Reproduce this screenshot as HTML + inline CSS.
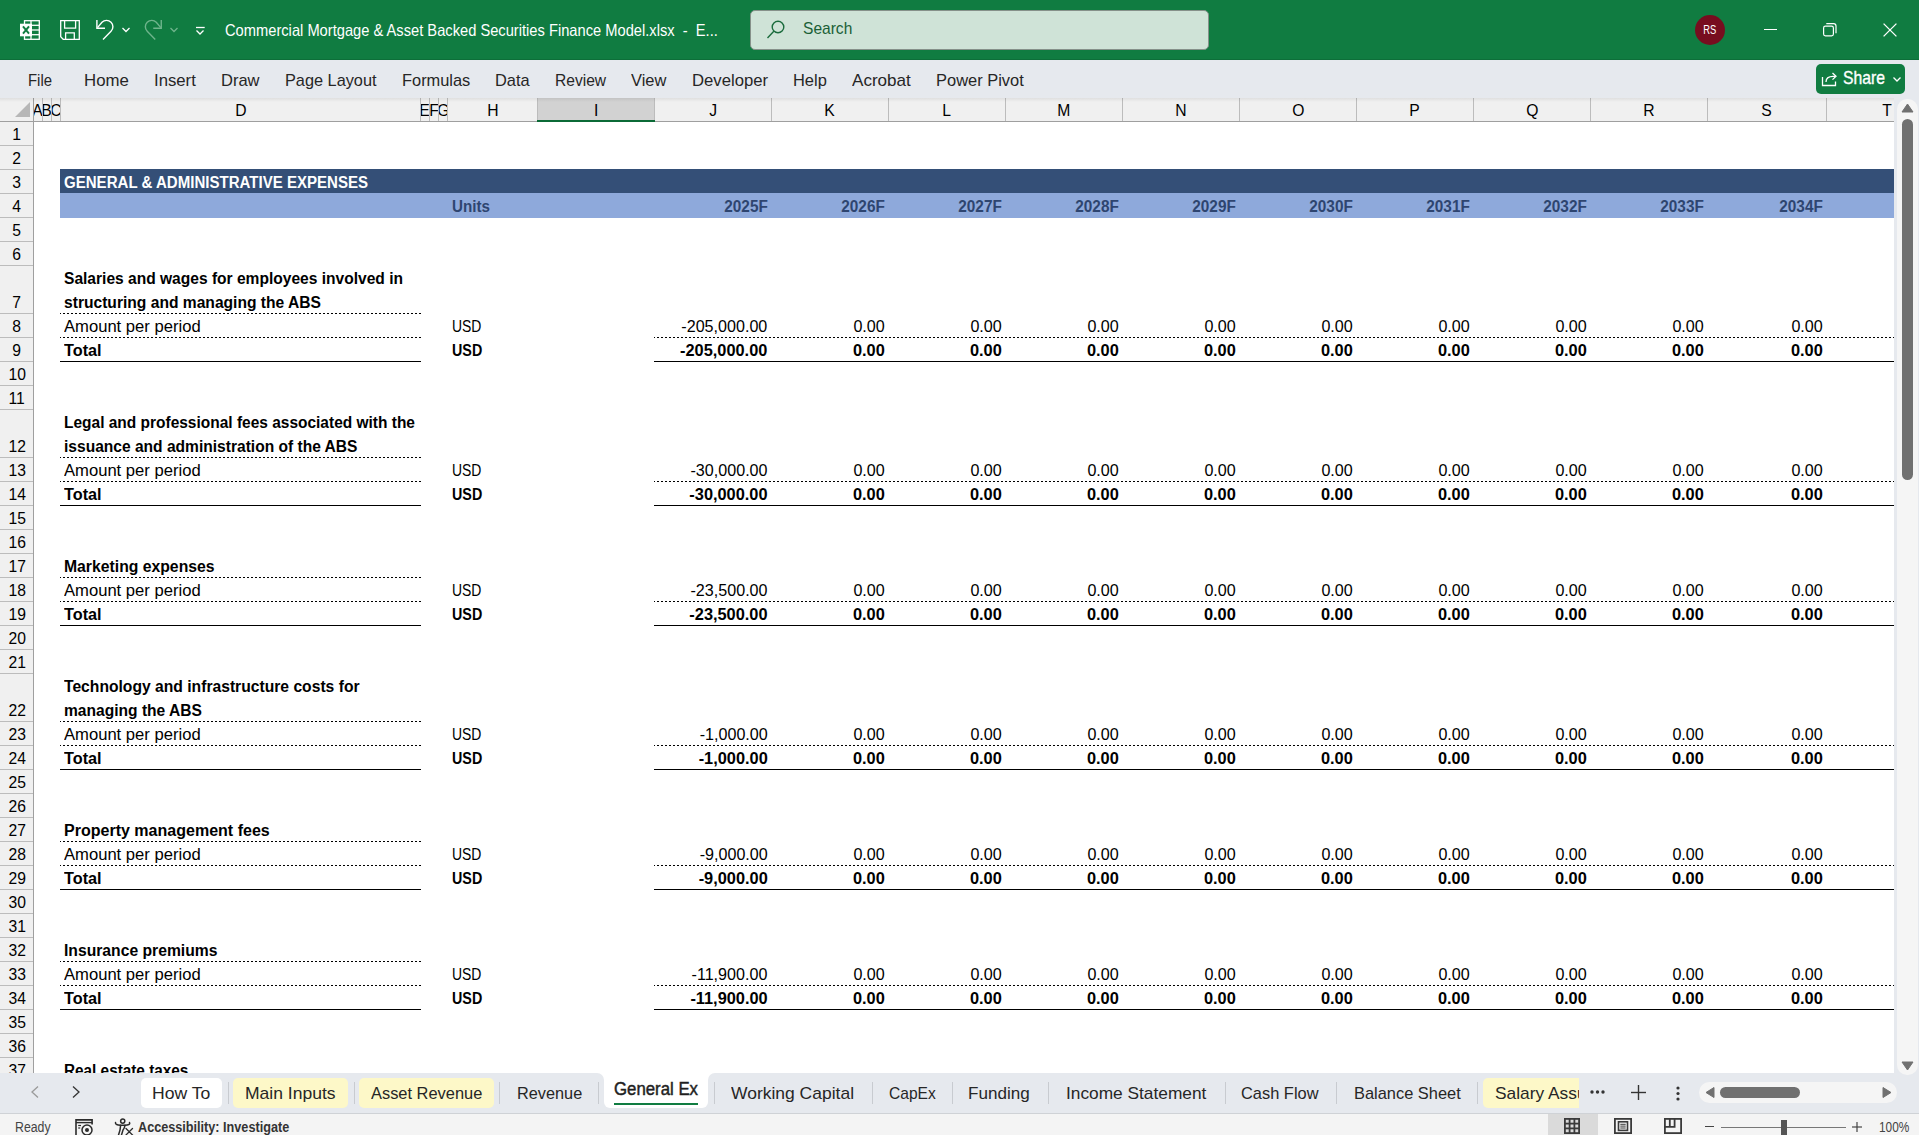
<!DOCTYPE html>
<html><head><meta charset="utf-8"><style>
html,body{margin:0;padding:0;}
body{width:1919px;height:1135px;position:relative;overflow:hidden;background:#fff;font-family:"Liberation Sans",sans-serif;}
.t{position:absolute;white-space:nowrap;}
</style></head><body>
<div style="position:absolute;left:0px;top:0px;width:1919px;height:60px;background:#107c41;"></div>
<div style="position:absolute;left:0px;top:59px;width:1919px;height:1px;background:#0d6e39;"></div>
<svg style="position:absolute;left:20px;top:20px;" width="20" height="20" viewBox="0 0 20 20"><g fill="none" stroke="#fff" stroke-width="1.3"><rect x="4.5" y="0.7" width="14.8" height="18.6"/><line x1="11" y1="5.3" x2="19.3" y2="5.3"/><line x1="11" y1="10" x2="19.3" y2="10"/><line x1="11" y1="14.7" x2="19.3" y2="14.7"/><line x1="11" y1="0.7" x2="11" y2="19.3"/></g><rect x="0" y="3.7" width="12" height="12.6" fill="#fff"/><path d="M3 6.3 L9 13.7 M9 6.3 L3 13.7" stroke="#107c41" stroke-width="2"/></svg>
<svg style="position:absolute;left:60px;top:20px;" width="20" height="20" viewBox="0 0 20 20"><g fill="none" stroke="#fff" stroke-width="1.3"><path d="M0.7 0.7 H19.3 V19.3 H3.2 L0.7 16.8 Z"/><path d="M4.6 0.7 V8.2 H15.6 V0.7"/><path d="M5.6 19.3 V12.8 H14.3 V19.3"/></g></svg>
<svg style="position:absolute;left:95px;top:19px;" width="22" height="22" viewBox="0 0 22 22"><g fill="none" stroke="#fff" stroke-width="1.4"><path d="M1.9 1 V9.2 H10"/><path d="M2.5 8.6 L6.97 3.27 A6.4 6.4 0 1 1 16.03 12.33 L8 20.4"/></g></svg>
<svg style="position:absolute;left:121px;top:26px;" width="10" height="8" viewBox="0 0 10 8"><path d="M1.5 2 L5 5.5 L8.5 2" fill="none" stroke="#fff" stroke-width="1.3"/></svg>
<svg style="position:absolute;left:143px;top:19px;" width="22" height="22" viewBox="0 0 22 22"><g fill="none" stroke="#6fb48c" stroke-width="1.4"><path d="M18.25 1 V9.2 H10.25"/><path d="M17.75 8.6 L13.28 3.27 A6.4 6.4 0 1 0 4.22 12.33 L12.25 20.4"/></g></svg>
<svg style="position:absolute;left:169px;top:26px;" width="10" height="8" viewBox="0 0 10 8"><path d="M1.5 2 L5 5.5 L8.5 2" fill="none" stroke="#6fb48c" stroke-width="1.3"/></svg>
<svg style="position:absolute;left:194px;top:25px;" width="12" height="12" viewBox="0 0 12 12"><g fill="none" stroke="#fff" stroke-width="1.3"><line x1="2" y1="2.5" x2="10.7" y2="2.5"/><path d="M2.5 5.5 L6 9 L9.5 5.5"/></g></svg>
<div class="t" style="left:225px;top:22.33px;font-size:16.5px;line-height:16.5px;color:#fff;"><span style="display:inline-block;transform:scaleX(0.8898);transform-origin:left 0;">Commercial Mortgage &amp; Asset Backed Securities Finance Model.xlsx&nbsp; -&nbsp; E...</span></div>
<div style="position:absolute;left:750px;top:10px;width:459px;height:40px;background:#cfe3d7;border:1px solid #86918a;border-radius:5px;box-sizing:border-box;"></div>
<svg style="position:absolute;left:765px;top:19px;" width="22" height="22" viewBox="0 0 22 22"><g fill="none" stroke="#1a6b3c" stroke-width="1.4"><circle cx="13" cy="8" r="5.8"/><line x1="8.8" y1="12.2" x2="2.5" y2="19"/></g></svg>
<div class="t" style="left:802.7px;top:20.21px;font-size:17px;line-height:17px;color:#1a5f36;"><span style="display:inline-block;transform:scaleX(0.9153);transform-origin:left 0;">Search</span></div>
<div style="position:absolute;left:1695px;top:15px;width:30px;height:30px;background:#770d1f;border-radius:50%;"></div>
<div class="t" style="left:710px;width:2000px;text-align:center;top:23.92px;font-size:12.5px;line-height:12.5px;color:#fff;"><span style="display:inline-block;transform:scaleX(0.7482);transform-origin:center 0;">RS</span></div>
<div style="position:absolute;left:1764px;top:29px;width:13px;height:1.3px;background:#fff;"></div>
<svg style="position:absolute;left:1822px;top:22px;" width="17" height="17" viewBox="0 0 17 17"><g fill="none" stroke="#fff" stroke-width="1.2"><rect x="1.6" y="4.1" width="9.8" height="9.8" rx="1.8"/><path d="M4.3 1.6 H11.6 A2.4 2.4 0 0 1 14 4 V11.3"/></g></svg>
<svg style="position:absolute;left:1882px;top:22px;" width="17" height="17" viewBox="0 0 17 17"><g stroke="#fff" stroke-width="1.3"><line x1="1.6" y1="1.6" x2="14.4" y2="14.4"/><line x1="14.4" y1="1.6" x2="1.6" y2="14.4"/></g></svg>
<div style="position:absolute;left:0px;top:60px;width:1919px;height:38px;background:#e6e9ee;"></div>
<div class="t" style="left:27.5px;top:71.61px;font-size:17px;line-height:17px;color:#262626;"><span style="display:inline-block;transform:scaleX(0.8757);transform-origin:left 0;">File</span></div>
<div class="t" style="left:84.4px;top:71.61px;font-size:17px;line-height:17px;color:#262626;"><span style="display:inline-block;transform:scaleX(0.9880);transform-origin:left 0;">Home</span></div>
<div class="t" style="left:154.2px;top:71.61px;font-size:17px;line-height:17px;color:#262626;"><span style="display:inline-block;transform:scaleX(0.9835);transform-origin:left 0;">Insert</span></div>
<div class="t" style="left:220.5px;top:71.61px;font-size:17px;line-height:17px;color:#262626;"><span style="display:inline-block;transform:scaleX(0.9705);transform-origin:left 0;">Draw</span></div>
<div class="t" style="left:284.5px;top:71.61px;font-size:17px;line-height:17px;color:#262626;"><span style="display:inline-block;transform:scaleX(0.9586);transform-origin:left 0;">Page Layout</span></div>
<div class="t" style="left:401.5px;top:71.61px;font-size:17px;line-height:17px;color:#262626;"><span style="display:inline-block;transform:scaleX(0.9641);transform-origin:left 0;">Formulas</span></div>
<div class="t" style="left:494.6px;top:71.61px;font-size:17px;line-height:17px;color:#262626;"><span style="display:inline-block;transform:scaleX(0.9636);transform-origin:left 0;">Data</span></div>
<div class="t" style="left:554.6px;top:71.61px;font-size:17px;line-height:17px;color:#262626;"><span style="display:inline-block;transform:scaleX(0.9166);transform-origin:left 0;">Review</span></div>
<div class="t" style="left:631.4px;top:71.61px;font-size:17px;line-height:17px;color:#262626;"><span style="display:inline-block;transform:scaleX(0.9686);transform-origin:left 0;">View</span></div>
<div class="t" style="left:691.6px;top:71.61px;font-size:17px;line-height:17px;color:#262626;"><span style="display:inline-block;transform:scaleX(0.9821);transform-origin:left 0;">Developer</span></div>
<div class="t" style="left:792.5px;top:71.61px;font-size:17px;line-height:17px;color:#262626;"><span style="display:inline-block;transform:scaleX(0.9666);transform-origin:left 0;">Help</span></div>
<div class="t" style="left:851.5px;top:71.61px;font-size:17px;line-height:17px;color:#262626;"><span style="display:inline-block;transform:scaleX(1.0038);transform-origin:left 0;">Acrobat</span></div>
<div class="t" style="left:935.7px;top:71.61px;font-size:17px;line-height:17px;color:#262626;"><span style="display:inline-block;transform:scaleX(0.9680);transform-origin:left 0;">Power Pivot</span></div>
<div style="position:absolute;left:1816px;top:64px;width:89px;height:30px;background:#107c41;border-radius:5px;"></div>
<svg style="position:absolute;left:1821px;top:70px;" width="17" height="17" viewBox="0 0 17 17"><g fill="none" stroke="#fff" stroke-width="1.3"><path d="M1.5 7 V15.5 H14.5 V11.5"/><path d="M5 12 C5 8 8 6.3 12 6.3 H14"/><path d="M11.5 3 L15 6.3 L11.5 9.6"/></g></svg>
<div class="t" style="left:1843px;top:69.34px;font-size:18.5px;line-height:18.5px;color:#fff;-webkit-text-stroke:0.35px #fff;"><span style="display:inline-block;transform:scaleX(0.8512);transform-origin:left 0;">Share</span></div>
<svg style="position:absolute;left:1892px;top:76px;" width="10" height="7" viewBox="0 0 10 7"><path d="M1.5 1.5 L5 5 L8.5 1.5" fill="none" stroke="#fff" stroke-width="1.3"/></svg>
<div style="position:absolute;left:0px;top:98px;width:1894px;height:24px;background:#f0f0f0;"></div>
<svg style="position:absolute;left:0px;top:98px;" width="33" height="23" viewBox="0 0 33 23"><path d="M30 4 V19 H15 Z" fill="#b7b7b7"/></svg>
<div style="position:absolute;left:537px;top:98px;width:118px;height:22px;background:#d2d2d2;"></div>
<div style="position:absolute;left:42px;top:98px;width:1px;height:23px;background:#bcbcbc;"></div>
<div style="position:absolute;left:51px;top:98px;width:1px;height:23px;background:#bcbcbc;"></div>
<div style="position:absolute;left:60px;top:98px;width:1px;height:23px;background:#bcbcbc;"></div>
<div style="position:absolute;left:420px;top:98px;width:1px;height:23px;background:#bcbcbc;"></div>
<div style="position:absolute;left:429px;top:98px;width:1px;height:23px;background:#bcbcbc;"></div>
<div style="position:absolute;left:438px;top:98px;width:1px;height:23px;background:#bcbcbc;"></div>
<div style="position:absolute;left:447px;top:98px;width:1px;height:23px;background:#bcbcbc;"></div>
<div style="position:absolute;left:537px;top:98px;width:1px;height:23px;background:#bcbcbc;"></div>
<div style="position:absolute;left:654px;top:98px;width:1px;height:23px;background:#bcbcbc;"></div>
<div style="position:absolute;left:771px;top:98px;width:1px;height:23px;background:#bcbcbc;"></div>
<div style="position:absolute;left:888px;top:98px;width:1px;height:23px;background:#bcbcbc;"></div>
<div style="position:absolute;left:1005px;top:98px;width:1px;height:23px;background:#bcbcbc;"></div>
<div style="position:absolute;left:1122px;top:98px;width:1px;height:23px;background:#bcbcbc;"></div>
<div style="position:absolute;left:1239px;top:98px;width:1px;height:23px;background:#bcbcbc;"></div>
<div style="position:absolute;left:1356px;top:98px;width:1px;height:23px;background:#bcbcbc;"></div>
<div style="position:absolute;left:1473px;top:98px;width:1px;height:23px;background:#bcbcbc;"></div>
<div style="position:absolute;left:1590px;top:98px;width:1px;height:23px;background:#bcbcbc;"></div>
<div style="position:absolute;left:1707px;top:98px;width:1px;height:23px;background:#bcbcbc;"></div>
<div style="position:absolute;left:1826px;top:98px;width:1px;height:23px;background:#bcbcbc;"></div>
<div style="position:absolute;left:1947px;top:98px;width:1px;height:23px;background:#bcbcbc;"></div>
<div style="position:absolute;left:33px;top:98px;width:1px;height:24px;background:#9f9f9f;"></div>
<div style="position:absolute;left:0px;top:121px;width:1894px;height:1px;background:#9f9f9f;"></div>
<div style="position:absolute;left:537px;top:120px;width:118px;height:2px;background:#0b6a36;"></div>
<div style="position:absolute;left:0px;top:98px;width:1919px;height:4px;background:linear-gradient(rgba(0,0,0,0.07),rgba(0,0,0,0));"></div>
<!--COLHDR-->
<div style="position:absolute;left:34px;top:98px;width:8px;height:23px;overflow:hidden;">
<div class="t" style="left:-996.0px;width:2000px;text-align:center;top:4.03px;font-size:16.5px;line-height:16.5px;color:#000;"><span style="display:inline-block;transform:scaleX(0.95);transform-origin:center 0;">A</span></div></div>
<div style="position:absolute;left:43px;top:98px;width:8px;height:23px;overflow:hidden;">
<div class="t" style="left:-996.0px;width:2000px;text-align:center;top:4.03px;font-size:16.5px;line-height:16.5px;color:#000;"><span style="display:inline-block;transform:scaleX(0.95);transform-origin:center 0;">B</span></div></div>
<div style="position:absolute;left:52px;top:98px;width:8px;height:23px;overflow:hidden;">
<div class="t" style="left:-996.0px;width:2000px;text-align:center;top:4.03px;font-size:16.5px;line-height:16.5px;color:#000;"><span style="display:inline-block;transform:scaleX(0.95);transform-origin:center 0;">C</span></div></div>
<div style="position:absolute;left:61px;top:98px;width:359px;height:23px;overflow:hidden;">
<div class="t" style="left:-820.5px;width:2000px;text-align:center;top:4.03px;font-size:16.5px;line-height:16.5px;color:#000;"><span style="display:inline-block;transform:scaleX(0.95);transform-origin:center 0;">D</span></div></div>
<div style="position:absolute;left:421px;top:98px;width:8px;height:23px;overflow:hidden;">
<div class="t" style="left:-996.0px;width:2000px;text-align:center;top:4.03px;font-size:16.5px;line-height:16.5px;color:#000;"><span style="display:inline-block;transform:scaleX(0.95);transform-origin:center 0;">E</span></div></div>
<div style="position:absolute;left:430px;top:98px;width:8px;height:23px;overflow:hidden;">
<div class="t" style="left:-996.0px;width:2000px;text-align:center;top:4.03px;font-size:16.5px;line-height:16.5px;color:#000;"><span style="display:inline-block;transform:scaleX(0.95);transform-origin:center 0;">F</span></div></div>
<div style="position:absolute;left:439px;top:98px;width:8px;height:23px;overflow:hidden;">
<div class="t" style="left:-996.0px;width:2000px;text-align:center;top:4.03px;font-size:16.5px;line-height:16.5px;color:#000;"><span style="display:inline-block;transform:scaleX(0.95);transform-origin:center 0;">G</span></div></div>
<div style="position:absolute;left:448px;top:98px;width:89px;height:23px;overflow:hidden;">
<div class="t" style="left:-955.5px;width:2000px;text-align:center;top:4.03px;font-size:16.5px;line-height:16.5px;color:#000;"><span style="display:inline-block;transform:scaleX(0.95);transform-origin:center 0;">H</span></div></div>
<div style="position:absolute;left:538px;top:98px;width:116px;height:23px;overflow:hidden;">
<div class="t" style="left:-942.0px;width:2000px;text-align:center;top:4.03px;font-size:16.5px;line-height:16.5px;color:#000;"><span style="display:inline-block;transform:scaleX(0.95);transform-origin:center 0;">I</span></div></div>
<div style="position:absolute;left:655px;top:98px;width:116px;height:23px;overflow:hidden;">
<div class="t" style="left:-942.0px;width:2000px;text-align:center;top:4.03px;font-size:16.5px;line-height:16.5px;color:#000;"><span style="display:inline-block;transform:scaleX(0.95);transform-origin:center 0;">J</span></div></div>
<div style="position:absolute;left:772px;top:98px;width:116px;height:23px;overflow:hidden;">
<div class="t" style="left:-942.0px;width:2000px;text-align:center;top:4.03px;font-size:16.5px;line-height:16.5px;color:#000;"><span style="display:inline-block;transform:scaleX(0.95);transform-origin:center 0;">K</span></div></div>
<div style="position:absolute;left:889px;top:98px;width:116px;height:23px;overflow:hidden;">
<div class="t" style="left:-942.0px;width:2000px;text-align:center;top:4.03px;font-size:16.5px;line-height:16.5px;color:#000;"><span style="display:inline-block;transform:scaleX(0.95);transform-origin:center 0;">L</span></div></div>
<div style="position:absolute;left:1006px;top:98px;width:116px;height:23px;overflow:hidden;">
<div class="t" style="left:-942.0px;width:2000px;text-align:center;top:4.03px;font-size:16.5px;line-height:16.5px;color:#000;"><span style="display:inline-block;transform:scaleX(0.95);transform-origin:center 0;">M</span></div></div>
<div style="position:absolute;left:1123px;top:98px;width:116px;height:23px;overflow:hidden;">
<div class="t" style="left:-942.0px;width:2000px;text-align:center;top:4.03px;font-size:16.5px;line-height:16.5px;color:#000;"><span style="display:inline-block;transform:scaleX(0.95);transform-origin:center 0;">N</span></div></div>
<div style="position:absolute;left:1240px;top:98px;width:116px;height:23px;overflow:hidden;">
<div class="t" style="left:-942.0px;width:2000px;text-align:center;top:4.03px;font-size:16.5px;line-height:16.5px;color:#000;"><span style="display:inline-block;transform:scaleX(0.95);transform-origin:center 0;">O</span></div></div>
<div style="position:absolute;left:1357px;top:98px;width:116px;height:23px;overflow:hidden;">
<div class="t" style="left:-942.0px;width:2000px;text-align:center;top:4.03px;font-size:16.5px;line-height:16.5px;color:#000;"><span style="display:inline-block;transform:scaleX(0.95);transform-origin:center 0;">P</span></div></div>
<div style="position:absolute;left:1474px;top:98px;width:116px;height:23px;overflow:hidden;">
<div class="t" style="left:-942.0px;width:2000px;text-align:center;top:4.03px;font-size:16.5px;line-height:16.5px;color:#000;"><span style="display:inline-block;transform:scaleX(0.95);transform-origin:center 0;">Q</span></div></div>
<div style="position:absolute;left:1591px;top:98px;width:116px;height:23px;overflow:hidden;">
<div class="t" style="left:-942.0px;width:2000px;text-align:center;top:4.03px;font-size:16.5px;line-height:16.5px;color:#000;"><span style="display:inline-block;transform:scaleX(0.95);transform-origin:center 0;">R</span></div></div>
<div style="position:absolute;left:1708px;top:98px;width:118px;height:23px;overflow:hidden;">
<div class="t" style="left:-941.0px;width:2000px;text-align:center;top:4.03px;font-size:16.5px;line-height:16.5px;color:#000;"><span style="display:inline-block;transform:scaleX(0.95);transform-origin:center 0;">S</span></div></div>
<div style="position:absolute;left:1827px;top:98px;width:67px;height:23px;overflow:hidden;">
<div class="t" style="left:-940.0px;width:2000px;text-align:center;top:4.03px;font-size:16.5px;line-height:16.5px;color:#000;"><span style="display:inline-block;transform:scaleX(0.95);transform-origin:center 0;">T</span></div></div>
<div style="position:absolute;left:0px;top:122px;width:33px;height:951px;background:#f0f0f0;"></div>
<div style="position:absolute;left:0px;top:145px;width:33px;height:1px;background:#bcbcbc;"></div>
<div style="position:absolute;left:0;top:122px;width:33px;height:24px;overflow:hidden;">
<div class="t" style="left:-983px;width:2000px;text-align:center;top:4.03px;font-size:16.5px;line-height:16.5px;color:#000;"><span style="display:inline-block;transform:scaleX(0.95);transform-origin:center 0;">1</span></div></div>
<div style="position:absolute;left:0px;top:169px;width:33px;height:1px;background:#bcbcbc;"></div>
<div style="position:absolute;left:0;top:146px;width:33px;height:24px;overflow:hidden;">
<div class="t" style="left:-983px;width:2000px;text-align:center;top:4.03px;font-size:16.5px;line-height:16.5px;color:#000;"><span style="display:inline-block;transform:scaleX(0.95);transform-origin:center 0;">2</span></div></div>
<div style="position:absolute;left:0px;top:193px;width:33px;height:1px;background:#bcbcbc;"></div>
<div style="position:absolute;left:0;top:170px;width:33px;height:24px;overflow:hidden;">
<div class="t" style="left:-983px;width:2000px;text-align:center;top:4.03px;font-size:16.5px;line-height:16.5px;color:#000;"><span style="display:inline-block;transform:scaleX(0.95);transform-origin:center 0;">3</span></div></div>
<div style="position:absolute;left:0px;top:217px;width:33px;height:1px;background:#bcbcbc;"></div>
<div style="position:absolute;left:0;top:194px;width:33px;height:24px;overflow:hidden;">
<div class="t" style="left:-983px;width:2000px;text-align:center;top:4.03px;font-size:16.5px;line-height:16.5px;color:#000;"><span style="display:inline-block;transform:scaleX(0.95);transform-origin:center 0;">4</span></div></div>
<div style="position:absolute;left:0px;top:241px;width:33px;height:1px;background:#bcbcbc;"></div>
<div style="position:absolute;left:0;top:218px;width:33px;height:24px;overflow:hidden;">
<div class="t" style="left:-983px;width:2000px;text-align:center;top:4.03px;font-size:16.5px;line-height:16.5px;color:#000;"><span style="display:inline-block;transform:scaleX(0.95);transform-origin:center 0;">5</span></div></div>
<div style="position:absolute;left:0px;top:265px;width:33px;height:1px;background:#bcbcbc;"></div>
<div style="position:absolute;left:0;top:242px;width:33px;height:24px;overflow:hidden;">
<div class="t" style="left:-983px;width:2000px;text-align:center;top:4.03px;font-size:16.5px;line-height:16.5px;color:#000;"><span style="display:inline-block;transform:scaleX(0.95);transform-origin:center 0;">6</span></div></div>
<div style="position:absolute;left:0px;top:313px;width:33px;height:1px;background:#bcbcbc;"></div>
<div style="position:absolute;left:0;top:266px;width:33px;height:48px;overflow:hidden;">
<div class="t" style="left:-983px;width:2000px;text-align:center;top:28.03px;font-size:16.5px;line-height:16.5px;color:#000;"><span style="display:inline-block;transform:scaleX(0.95);transform-origin:center 0;">7</span></div></div>
<div style="position:absolute;left:0px;top:337px;width:33px;height:1px;background:#bcbcbc;"></div>
<div style="position:absolute;left:0;top:314px;width:33px;height:24px;overflow:hidden;">
<div class="t" style="left:-983px;width:2000px;text-align:center;top:4.03px;font-size:16.5px;line-height:16.5px;color:#000;"><span style="display:inline-block;transform:scaleX(0.95);transform-origin:center 0;">8</span></div></div>
<div style="position:absolute;left:0px;top:361px;width:33px;height:1px;background:#bcbcbc;"></div>
<div style="position:absolute;left:0;top:338px;width:33px;height:24px;overflow:hidden;">
<div class="t" style="left:-983px;width:2000px;text-align:center;top:4.03px;font-size:16.5px;line-height:16.5px;color:#000;"><span style="display:inline-block;transform:scaleX(0.95);transform-origin:center 0;">9</span></div></div>
<div style="position:absolute;left:0px;top:385px;width:33px;height:1px;background:#bcbcbc;"></div>
<div style="position:absolute;left:0;top:362px;width:33px;height:24px;overflow:hidden;">
<div class="t" style="left:-983px;width:2000px;text-align:center;top:4.03px;font-size:16.5px;line-height:16.5px;color:#000;"><span style="display:inline-block;transform:scaleX(0.95);transform-origin:center 0;">10</span></div></div>
<div style="position:absolute;left:0px;top:409px;width:33px;height:1px;background:#bcbcbc;"></div>
<div style="position:absolute;left:0;top:386px;width:33px;height:24px;overflow:hidden;">
<div class="t" style="left:-983px;width:2000px;text-align:center;top:4.03px;font-size:16.5px;line-height:16.5px;color:#000;"><span style="display:inline-block;transform:scaleX(0.95);transform-origin:center 0;">11</span></div></div>
<div style="position:absolute;left:0px;top:457px;width:33px;height:1px;background:#bcbcbc;"></div>
<div style="position:absolute;left:0;top:410px;width:33px;height:48px;overflow:hidden;">
<div class="t" style="left:-983px;width:2000px;text-align:center;top:28.03px;font-size:16.5px;line-height:16.5px;color:#000;"><span style="display:inline-block;transform:scaleX(0.95);transform-origin:center 0;">12</span></div></div>
<div style="position:absolute;left:0px;top:481px;width:33px;height:1px;background:#bcbcbc;"></div>
<div style="position:absolute;left:0;top:458px;width:33px;height:24px;overflow:hidden;">
<div class="t" style="left:-983px;width:2000px;text-align:center;top:4.03px;font-size:16.5px;line-height:16.5px;color:#000;"><span style="display:inline-block;transform:scaleX(0.95);transform-origin:center 0;">13</span></div></div>
<div style="position:absolute;left:0px;top:505px;width:33px;height:1px;background:#bcbcbc;"></div>
<div style="position:absolute;left:0;top:482px;width:33px;height:24px;overflow:hidden;">
<div class="t" style="left:-983px;width:2000px;text-align:center;top:4.03px;font-size:16.5px;line-height:16.5px;color:#000;"><span style="display:inline-block;transform:scaleX(0.95);transform-origin:center 0;">14</span></div></div>
<div style="position:absolute;left:0px;top:529px;width:33px;height:1px;background:#bcbcbc;"></div>
<div style="position:absolute;left:0;top:506px;width:33px;height:24px;overflow:hidden;">
<div class="t" style="left:-983px;width:2000px;text-align:center;top:4.03px;font-size:16.5px;line-height:16.5px;color:#000;"><span style="display:inline-block;transform:scaleX(0.95);transform-origin:center 0;">15</span></div></div>
<div style="position:absolute;left:0px;top:553px;width:33px;height:1px;background:#bcbcbc;"></div>
<div style="position:absolute;left:0;top:530px;width:33px;height:24px;overflow:hidden;">
<div class="t" style="left:-983px;width:2000px;text-align:center;top:4.03px;font-size:16.5px;line-height:16.5px;color:#000;"><span style="display:inline-block;transform:scaleX(0.95);transform-origin:center 0;">16</span></div></div>
<div style="position:absolute;left:0px;top:577px;width:33px;height:1px;background:#bcbcbc;"></div>
<div style="position:absolute;left:0;top:554px;width:33px;height:24px;overflow:hidden;">
<div class="t" style="left:-983px;width:2000px;text-align:center;top:4.03px;font-size:16.5px;line-height:16.5px;color:#000;"><span style="display:inline-block;transform:scaleX(0.95);transform-origin:center 0;">17</span></div></div>
<div style="position:absolute;left:0px;top:601px;width:33px;height:1px;background:#bcbcbc;"></div>
<div style="position:absolute;left:0;top:578px;width:33px;height:24px;overflow:hidden;">
<div class="t" style="left:-983px;width:2000px;text-align:center;top:4.03px;font-size:16.5px;line-height:16.5px;color:#000;"><span style="display:inline-block;transform:scaleX(0.95);transform-origin:center 0;">18</span></div></div>
<div style="position:absolute;left:0px;top:625px;width:33px;height:1px;background:#bcbcbc;"></div>
<div style="position:absolute;left:0;top:602px;width:33px;height:24px;overflow:hidden;">
<div class="t" style="left:-983px;width:2000px;text-align:center;top:4.03px;font-size:16.5px;line-height:16.5px;color:#000;"><span style="display:inline-block;transform:scaleX(0.95);transform-origin:center 0;">19</span></div></div>
<div style="position:absolute;left:0px;top:649px;width:33px;height:1px;background:#bcbcbc;"></div>
<div style="position:absolute;left:0;top:626px;width:33px;height:24px;overflow:hidden;">
<div class="t" style="left:-983px;width:2000px;text-align:center;top:4.03px;font-size:16.5px;line-height:16.5px;color:#000;"><span style="display:inline-block;transform:scaleX(0.95);transform-origin:center 0;">20</span></div></div>
<div style="position:absolute;left:0px;top:673px;width:33px;height:1px;background:#bcbcbc;"></div>
<div style="position:absolute;left:0;top:650px;width:33px;height:24px;overflow:hidden;">
<div class="t" style="left:-983px;width:2000px;text-align:center;top:4.03px;font-size:16.5px;line-height:16.5px;color:#000;"><span style="display:inline-block;transform:scaleX(0.95);transform-origin:center 0;">21</span></div></div>
<div style="position:absolute;left:0px;top:721px;width:33px;height:1px;background:#bcbcbc;"></div>
<div style="position:absolute;left:0;top:674px;width:33px;height:48px;overflow:hidden;">
<div class="t" style="left:-983px;width:2000px;text-align:center;top:28.03px;font-size:16.5px;line-height:16.5px;color:#000;"><span style="display:inline-block;transform:scaleX(0.95);transform-origin:center 0;">22</span></div></div>
<div style="position:absolute;left:0px;top:745px;width:33px;height:1px;background:#bcbcbc;"></div>
<div style="position:absolute;left:0;top:722px;width:33px;height:24px;overflow:hidden;">
<div class="t" style="left:-983px;width:2000px;text-align:center;top:4.03px;font-size:16.5px;line-height:16.5px;color:#000;"><span style="display:inline-block;transform:scaleX(0.95);transform-origin:center 0;">23</span></div></div>
<div style="position:absolute;left:0px;top:769px;width:33px;height:1px;background:#bcbcbc;"></div>
<div style="position:absolute;left:0;top:746px;width:33px;height:24px;overflow:hidden;">
<div class="t" style="left:-983px;width:2000px;text-align:center;top:4.03px;font-size:16.5px;line-height:16.5px;color:#000;"><span style="display:inline-block;transform:scaleX(0.95);transform-origin:center 0;">24</span></div></div>
<div style="position:absolute;left:0px;top:793px;width:33px;height:1px;background:#bcbcbc;"></div>
<div style="position:absolute;left:0;top:770px;width:33px;height:24px;overflow:hidden;">
<div class="t" style="left:-983px;width:2000px;text-align:center;top:4.03px;font-size:16.5px;line-height:16.5px;color:#000;"><span style="display:inline-block;transform:scaleX(0.95);transform-origin:center 0;">25</span></div></div>
<div style="position:absolute;left:0px;top:817px;width:33px;height:1px;background:#bcbcbc;"></div>
<div style="position:absolute;left:0;top:794px;width:33px;height:24px;overflow:hidden;">
<div class="t" style="left:-983px;width:2000px;text-align:center;top:4.03px;font-size:16.5px;line-height:16.5px;color:#000;"><span style="display:inline-block;transform:scaleX(0.95);transform-origin:center 0;">26</span></div></div>
<div style="position:absolute;left:0px;top:841px;width:33px;height:1px;background:#bcbcbc;"></div>
<div style="position:absolute;left:0;top:818px;width:33px;height:24px;overflow:hidden;">
<div class="t" style="left:-983px;width:2000px;text-align:center;top:4.03px;font-size:16.5px;line-height:16.5px;color:#000;"><span style="display:inline-block;transform:scaleX(0.95);transform-origin:center 0;">27</span></div></div>
<div style="position:absolute;left:0px;top:865px;width:33px;height:1px;background:#bcbcbc;"></div>
<div style="position:absolute;left:0;top:842px;width:33px;height:24px;overflow:hidden;">
<div class="t" style="left:-983px;width:2000px;text-align:center;top:4.03px;font-size:16.5px;line-height:16.5px;color:#000;"><span style="display:inline-block;transform:scaleX(0.95);transform-origin:center 0;">28</span></div></div>
<div style="position:absolute;left:0px;top:889px;width:33px;height:1px;background:#bcbcbc;"></div>
<div style="position:absolute;left:0;top:866px;width:33px;height:24px;overflow:hidden;">
<div class="t" style="left:-983px;width:2000px;text-align:center;top:4.03px;font-size:16.5px;line-height:16.5px;color:#000;"><span style="display:inline-block;transform:scaleX(0.95);transform-origin:center 0;">29</span></div></div>
<div style="position:absolute;left:0px;top:913px;width:33px;height:1px;background:#bcbcbc;"></div>
<div style="position:absolute;left:0;top:890px;width:33px;height:24px;overflow:hidden;">
<div class="t" style="left:-983px;width:2000px;text-align:center;top:4.03px;font-size:16.5px;line-height:16.5px;color:#000;"><span style="display:inline-block;transform:scaleX(0.95);transform-origin:center 0;">30</span></div></div>
<div style="position:absolute;left:0px;top:937px;width:33px;height:1px;background:#bcbcbc;"></div>
<div style="position:absolute;left:0;top:914px;width:33px;height:24px;overflow:hidden;">
<div class="t" style="left:-983px;width:2000px;text-align:center;top:4.03px;font-size:16.5px;line-height:16.5px;color:#000;"><span style="display:inline-block;transform:scaleX(0.95);transform-origin:center 0;">31</span></div></div>
<div style="position:absolute;left:0px;top:961px;width:33px;height:1px;background:#bcbcbc;"></div>
<div style="position:absolute;left:0;top:938px;width:33px;height:24px;overflow:hidden;">
<div class="t" style="left:-983px;width:2000px;text-align:center;top:4.03px;font-size:16.5px;line-height:16.5px;color:#000;"><span style="display:inline-block;transform:scaleX(0.95);transform-origin:center 0;">32</span></div></div>
<div style="position:absolute;left:0px;top:985px;width:33px;height:1px;background:#bcbcbc;"></div>
<div style="position:absolute;left:0;top:962px;width:33px;height:24px;overflow:hidden;">
<div class="t" style="left:-983px;width:2000px;text-align:center;top:4.03px;font-size:16.5px;line-height:16.5px;color:#000;"><span style="display:inline-block;transform:scaleX(0.95);transform-origin:center 0;">33</span></div></div>
<div style="position:absolute;left:0px;top:1009px;width:33px;height:1px;background:#bcbcbc;"></div>
<div style="position:absolute;left:0;top:986px;width:33px;height:24px;overflow:hidden;">
<div class="t" style="left:-983px;width:2000px;text-align:center;top:4.03px;font-size:16.5px;line-height:16.5px;color:#000;"><span style="display:inline-block;transform:scaleX(0.95);transform-origin:center 0;">34</span></div></div>
<div style="position:absolute;left:0px;top:1033px;width:33px;height:1px;background:#bcbcbc;"></div>
<div style="position:absolute;left:0;top:1010px;width:33px;height:24px;overflow:hidden;">
<div class="t" style="left:-983px;width:2000px;text-align:center;top:4.03px;font-size:16.5px;line-height:16.5px;color:#000;"><span style="display:inline-block;transform:scaleX(0.95);transform-origin:center 0;">35</span></div></div>
<div style="position:absolute;left:0px;top:1057px;width:33px;height:1px;background:#bcbcbc;"></div>
<div style="position:absolute;left:0;top:1034px;width:33px;height:24px;overflow:hidden;">
<div class="t" style="left:-983px;width:2000px;text-align:center;top:4.03px;font-size:16.5px;line-height:16.5px;color:#000;"><span style="display:inline-block;transform:scaleX(0.95);transform-origin:center 0;">36</span></div></div>
<div style="position:absolute;left:0;top:1058px;width:33px;height:15px;overflow:hidden;">
<div class="t" style="left:-983px;width:2000px;text-align:center;top:4.03px;font-size:16.5px;line-height:16.5px;color:#000;"><span style="display:inline-block;transform:scaleX(0.95);transform-origin:center 0;">37</span></div></div>
<div style="position:absolute;left:33px;top:122px;width:1px;height:951px;background:#9f9f9f;"></div>
<div style="position:absolute;left:60px;top:169px;width:1834px;height:24px;background:#344f77;"></div>
<div style="position:absolute;left:60px;top:193px;width:1834px;height:25px;background:#8ea9db;"></div>
<div class="t" style="left:64px;top:174.63px;font-size:15.8px;line-height:15.8px;font-weight:700;color:#fff;"><span style="display:inline-block;transform:scaleX(0.9526);transform-origin:left 0;">GENERAL &amp; ADMINISTRATIVE EXPENSES</span></div>
<div class="t" style="left:452px;top:198.63px;font-size:15.8px;line-height:15.8px;font-weight:700;color:#2e4570;"><span style="display:inline-block;transform:scaleX(0.9620);transform-origin:left 0;">Units</span></div>
<div class="t" style="left:-1232.5px;width:2000px;text-align:right;top:198.63px;font-size:15.8px;line-height:15.8px;font-weight:700;color:#2e4570;"><span style="display:inline-block;transform:scaleX(0.9714);transform-origin:right 0;">2025F</span></div>
<div class="t" style="left:-1115.5px;width:2000px;text-align:right;top:198.63px;font-size:15.8px;line-height:15.8px;font-weight:700;color:#2e4570;"><span style="display:inline-block;transform:scaleX(0.9714);transform-origin:right 0;">2026F</span></div>
<div class="t" style="left:-998.5px;width:2000px;text-align:right;top:198.63px;font-size:15.8px;line-height:15.8px;font-weight:700;color:#2e4570;"><span style="display:inline-block;transform:scaleX(0.9714);transform-origin:right 0;">2027F</span></div>
<div class="t" style="left:-881.5px;width:2000px;text-align:right;top:198.63px;font-size:15.8px;line-height:15.8px;font-weight:700;color:#2e4570;"><span style="display:inline-block;transform:scaleX(0.9714);transform-origin:right 0;">2028F</span></div>
<div class="t" style="left:-764.5px;width:2000px;text-align:right;top:198.63px;font-size:15.8px;line-height:15.8px;font-weight:700;color:#2e4570;"><span style="display:inline-block;transform:scaleX(0.9714);transform-origin:right 0;">2029F</span></div>
<div class="t" style="left:-647.5px;width:2000px;text-align:right;top:198.63px;font-size:15.8px;line-height:15.8px;font-weight:700;color:#2e4570;"><span style="display:inline-block;transform:scaleX(0.9714);transform-origin:right 0;">2030F</span></div>
<div class="t" style="left:-530.5px;width:2000px;text-align:right;top:198.63px;font-size:15.8px;line-height:15.8px;font-weight:700;color:#2e4570;"><span style="display:inline-block;transform:scaleX(0.9714);transform-origin:right 0;">2031F</span></div>
<div class="t" style="left:-413.5px;width:2000px;text-align:right;top:198.63px;font-size:15.8px;line-height:15.8px;font-weight:700;color:#2e4570;"><span style="display:inline-block;transform:scaleX(0.9714);transform-origin:right 0;">2032F</span></div>
<div class="t" style="left:-296.5px;width:2000px;text-align:right;top:198.63px;font-size:15.8px;line-height:15.8px;font-weight:700;color:#2e4570;"><span style="display:inline-block;transform:scaleX(0.9714);transform-origin:right 0;">2033F</span></div>
<div class="t" style="left:-177.5px;width:2000px;text-align:right;top:198.63px;font-size:15.8px;line-height:15.8px;font-weight:700;color:#2e4570;"><span style="display:inline-block;transform:scaleX(0.9714);transform-origin:right 0;">2034F</span></div>
<div style="position:absolute;left:0;top:0;width:1919px;height:1073px;overflow:hidden;">
<div class="t" style="left:64px;top:270.63px;font-size:15.8px;line-height:15.8px;font-weight:700;color:#000;"><span style="display:inline-block;transform:scaleX(0.9850);transform-origin:left 0;">Salaries and wages for employees involved in</span></div>
<div class="t" style="left:64px;top:294.63px;font-size:15.8px;line-height:15.8px;font-weight:700;color:#000;"><span style="display:inline-block;transform:scaleX(0.9880);transform-origin:left 0;">structuring and managing the ABS</span></div>
<div style="position:absolute;left:60px;top:313px;width:361px;height:1px;background:repeating-linear-gradient(90deg,#000 0 1px,transparent 1px 3px,#000 3px 4px);"></div>
<div class="t" style="left:64px;top:318.63px;font-size:15.8px;line-height:15.8px;color:#000;"><span style="display:inline-block;transform:scaleX(1.0513);transform-origin:left 0;">Amount per period</span></div>
<div class="t" style="left:452px;top:318.63px;font-size:15.8px;line-height:15.8px;color:#000;"><span style="display:inline-block;transform:scaleX(0.8817);transform-origin:left 0;">USD</span></div>
<div class="t" style="left:64px;top:342.63px;font-size:15.8px;line-height:15.8px;font-weight:700;color:#000;"><span style="display:inline-block;transform:scaleX(1.0279);transform-origin:left 0;">Total</span></div>
<div class="t" style="left:452px;top:342.63px;font-size:15.8px;line-height:15.8px;font-weight:700;color:#000;"><span style="display:inline-block;transform:scaleX(0.9057);transform-origin:left 0;">USD</span></div>
<div class="t" style="left:-1232.6px;width:2000px;text-align:right;top:318.63px;font-size:15.8px;line-height:15.8px;color:#000;"><span style="display:inline-block;transform:scaleX(1.0200);transform-origin:right 0;">-205,000.00</span></div>
<div class="t" style="left:-1232.6px;width:2000px;text-align:right;top:342.63px;font-size:15.8px;line-height:15.8px;font-weight:700;color:#000;"><span style="display:inline-block;transform:scaleX(1.0350);transform-origin:right 0;">-205,000.00</span></div>
<div class="t" style="left:-1115.6px;width:2000px;text-align:right;top:318.63px;font-size:15.8px;line-height:15.8px;color:#000;"><span style="display:inline-block;transform:scaleX(1.0200);transform-origin:right 0;">0.00</span></div>
<div class="t" style="left:-1115.6px;width:2000px;text-align:right;top:342.63px;font-size:15.8px;line-height:15.8px;font-weight:700;color:#000;"><span style="display:inline-block;transform:scaleX(1.0350);transform-origin:right 0;">0.00</span></div>
<div class="t" style="left:-998.6px;width:2000px;text-align:right;top:318.63px;font-size:15.8px;line-height:15.8px;color:#000;"><span style="display:inline-block;transform:scaleX(1.0200);transform-origin:right 0;">0.00</span></div>
<div class="t" style="left:-998.6px;width:2000px;text-align:right;top:342.63px;font-size:15.8px;line-height:15.8px;font-weight:700;color:#000;"><span style="display:inline-block;transform:scaleX(1.0350);transform-origin:right 0;">0.00</span></div>
<div class="t" style="left:-881.5999999999999px;width:2000px;text-align:right;top:318.63px;font-size:15.8px;line-height:15.8px;color:#000;"><span style="display:inline-block;transform:scaleX(1.0200);transform-origin:right 0;">0.00</span></div>
<div class="t" style="left:-881.5999999999999px;width:2000px;text-align:right;top:342.63px;font-size:15.8px;line-height:15.8px;font-weight:700;color:#000;"><span style="display:inline-block;transform:scaleX(1.0350);transform-origin:right 0;">0.00</span></div>
<div class="t" style="left:-764.5999999999999px;width:2000px;text-align:right;top:318.63px;font-size:15.8px;line-height:15.8px;color:#000;"><span style="display:inline-block;transform:scaleX(1.0200);transform-origin:right 0;">0.00</span></div>
<div class="t" style="left:-764.5999999999999px;width:2000px;text-align:right;top:342.63px;font-size:15.8px;line-height:15.8px;font-weight:700;color:#000;"><span style="display:inline-block;transform:scaleX(1.0350);transform-origin:right 0;">0.00</span></div>
<div class="t" style="left:-647.5999999999999px;width:2000px;text-align:right;top:318.63px;font-size:15.8px;line-height:15.8px;color:#000;"><span style="display:inline-block;transform:scaleX(1.0200);transform-origin:right 0;">0.00</span></div>
<div class="t" style="left:-647.5999999999999px;width:2000px;text-align:right;top:342.63px;font-size:15.8px;line-height:15.8px;font-weight:700;color:#000;"><span style="display:inline-block;transform:scaleX(1.0350);transform-origin:right 0;">0.00</span></div>
<div class="t" style="left:-530.5999999999999px;width:2000px;text-align:right;top:318.63px;font-size:15.8px;line-height:15.8px;color:#000;"><span style="display:inline-block;transform:scaleX(1.0200);transform-origin:right 0;">0.00</span></div>
<div class="t" style="left:-530.5999999999999px;width:2000px;text-align:right;top:342.63px;font-size:15.8px;line-height:15.8px;font-weight:700;color:#000;"><span style="display:inline-block;transform:scaleX(1.0350);transform-origin:right 0;">0.00</span></div>
<div class="t" style="left:-413.5999999999999px;width:2000px;text-align:right;top:318.63px;font-size:15.8px;line-height:15.8px;color:#000;"><span style="display:inline-block;transform:scaleX(1.0200);transform-origin:right 0;">0.00</span></div>
<div class="t" style="left:-413.5999999999999px;width:2000px;text-align:right;top:342.63px;font-size:15.8px;line-height:15.8px;font-weight:700;color:#000;"><span style="display:inline-block;transform:scaleX(1.0350);transform-origin:right 0;">0.00</span></div>
<div class="t" style="left:-296.5999999999999px;width:2000px;text-align:right;top:318.63px;font-size:15.8px;line-height:15.8px;color:#000;"><span style="display:inline-block;transform:scaleX(1.0200);transform-origin:right 0;">0.00</span></div>
<div class="t" style="left:-296.5999999999999px;width:2000px;text-align:right;top:342.63px;font-size:15.8px;line-height:15.8px;font-weight:700;color:#000;"><span style="display:inline-block;transform:scaleX(1.0350);transform-origin:right 0;">0.00</span></div>
<div class="t" style="left:-177.5999999999999px;width:2000px;text-align:right;top:318.63px;font-size:15.8px;line-height:15.8px;color:#000;"><span style="display:inline-block;transform:scaleX(1.0200);transform-origin:right 0;">0.00</span></div>
<div class="t" style="left:-177.5999999999999px;width:2000px;text-align:right;top:342.63px;font-size:15.8px;line-height:15.8px;font-weight:700;color:#000;"><span style="display:inline-block;transform:scaleX(1.0350);transform-origin:right 0;">0.00</span></div>
<div style="position:absolute;left:60px;top:337px;width:361px;height:1px;background:repeating-linear-gradient(90deg,#000 0 1px,transparent 1px 3px,#000 3px 4px);"></div>
<div style="position:absolute;left:654px;top:337px;width:1240px;height:1px;background:repeating-linear-gradient(90deg,#000 0 1px,transparent 1px 3px,#000 3px 4px);"></div>
<div style="position:absolute;left:60px;top:361px;width:361px;height:1px;background:#000;"></div>
<div style="position:absolute;left:654px;top:361px;width:1240px;height:1px;background:#000;"></div>
<div class="t" style="left:64px;top:414.63px;font-size:15.8px;line-height:15.8px;font-weight:700;color:#000;"><span style="display:inline-block;transform:scaleX(0.9799);transform-origin:left 0;">Legal and professional fees associated with the</span></div>
<div class="t" style="left:64px;top:438.63px;font-size:15.8px;line-height:15.8px;font-weight:700;color:#000;"><span style="display:inline-block;transform:scaleX(0.9853);transform-origin:left 0;">issuance and administration of the ABS</span></div>
<div style="position:absolute;left:60px;top:457px;width:361px;height:1px;background:repeating-linear-gradient(90deg,#000 0 1px,transparent 1px 3px,#000 3px 4px);"></div>
<div class="t" style="left:64px;top:462.63px;font-size:15.8px;line-height:15.8px;color:#000;"><span style="display:inline-block;transform:scaleX(1.0513);transform-origin:left 0;">Amount per period</span></div>
<div class="t" style="left:452px;top:462.63px;font-size:15.8px;line-height:15.8px;color:#000;"><span style="display:inline-block;transform:scaleX(0.8817);transform-origin:left 0;">USD</span></div>
<div class="t" style="left:64px;top:486.63px;font-size:15.8px;line-height:15.8px;font-weight:700;color:#000;"><span style="display:inline-block;transform:scaleX(1.0279);transform-origin:left 0;">Total</span></div>
<div class="t" style="left:452px;top:486.63px;font-size:15.8px;line-height:15.8px;font-weight:700;color:#000;"><span style="display:inline-block;transform:scaleX(0.9057);transform-origin:left 0;">USD</span></div>
<div class="t" style="left:-1232.6px;width:2000px;text-align:right;top:462.63px;font-size:15.8px;line-height:15.8px;color:#000;"><span style="display:inline-block;transform:scaleX(1.0200);transform-origin:right 0;">-30,000.00</span></div>
<div class="t" style="left:-1232.6px;width:2000px;text-align:right;top:486.63px;font-size:15.8px;line-height:15.8px;font-weight:700;color:#000;"><span style="display:inline-block;transform:scaleX(1.0350);transform-origin:right 0;">-30,000.00</span></div>
<div class="t" style="left:-1115.6px;width:2000px;text-align:right;top:462.63px;font-size:15.8px;line-height:15.8px;color:#000;"><span style="display:inline-block;transform:scaleX(1.0200);transform-origin:right 0;">0.00</span></div>
<div class="t" style="left:-1115.6px;width:2000px;text-align:right;top:486.63px;font-size:15.8px;line-height:15.8px;font-weight:700;color:#000;"><span style="display:inline-block;transform:scaleX(1.0350);transform-origin:right 0;">0.00</span></div>
<div class="t" style="left:-998.6px;width:2000px;text-align:right;top:462.63px;font-size:15.8px;line-height:15.8px;color:#000;"><span style="display:inline-block;transform:scaleX(1.0200);transform-origin:right 0;">0.00</span></div>
<div class="t" style="left:-998.6px;width:2000px;text-align:right;top:486.63px;font-size:15.8px;line-height:15.8px;font-weight:700;color:#000;"><span style="display:inline-block;transform:scaleX(1.0350);transform-origin:right 0;">0.00</span></div>
<div class="t" style="left:-881.5999999999999px;width:2000px;text-align:right;top:462.63px;font-size:15.8px;line-height:15.8px;color:#000;"><span style="display:inline-block;transform:scaleX(1.0200);transform-origin:right 0;">0.00</span></div>
<div class="t" style="left:-881.5999999999999px;width:2000px;text-align:right;top:486.63px;font-size:15.8px;line-height:15.8px;font-weight:700;color:#000;"><span style="display:inline-block;transform:scaleX(1.0350);transform-origin:right 0;">0.00</span></div>
<div class="t" style="left:-764.5999999999999px;width:2000px;text-align:right;top:462.63px;font-size:15.8px;line-height:15.8px;color:#000;"><span style="display:inline-block;transform:scaleX(1.0200);transform-origin:right 0;">0.00</span></div>
<div class="t" style="left:-764.5999999999999px;width:2000px;text-align:right;top:486.63px;font-size:15.8px;line-height:15.8px;font-weight:700;color:#000;"><span style="display:inline-block;transform:scaleX(1.0350);transform-origin:right 0;">0.00</span></div>
<div class="t" style="left:-647.5999999999999px;width:2000px;text-align:right;top:462.63px;font-size:15.8px;line-height:15.8px;color:#000;"><span style="display:inline-block;transform:scaleX(1.0200);transform-origin:right 0;">0.00</span></div>
<div class="t" style="left:-647.5999999999999px;width:2000px;text-align:right;top:486.63px;font-size:15.8px;line-height:15.8px;font-weight:700;color:#000;"><span style="display:inline-block;transform:scaleX(1.0350);transform-origin:right 0;">0.00</span></div>
<div class="t" style="left:-530.5999999999999px;width:2000px;text-align:right;top:462.63px;font-size:15.8px;line-height:15.8px;color:#000;"><span style="display:inline-block;transform:scaleX(1.0200);transform-origin:right 0;">0.00</span></div>
<div class="t" style="left:-530.5999999999999px;width:2000px;text-align:right;top:486.63px;font-size:15.8px;line-height:15.8px;font-weight:700;color:#000;"><span style="display:inline-block;transform:scaleX(1.0350);transform-origin:right 0;">0.00</span></div>
<div class="t" style="left:-413.5999999999999px;width:2000px;text-align:right;top:462.63px;font-size:15.8px;line-height:15.8px;color:#000;"><span style="display:inline-block;transform:scaleX(1.0200);transform-origin:right 0;">0.00</span></div>
<div class="t" style="left:-413.5999999999999px;width:2000px;text-align:right;top:486.63px;font-size:15.8px;line-height:15.8px;font-weight:700;color:#000;"><span style="display:inline-block;transform:scaleX(1.0350);transform-origin:right 0;">0.00</span></div>
<div class="t" style="left:-296.5999999999999px;width:2000px;text-align:right;top:462.63px;font-size:15.8px;line-height:15.8px;color:#000;"><span style="display:inline-block;transform:scaleX(1.0200);transform-origin:right 0;">0.00</span></div>
<div class="t" style="left:-296.5999999999999px;width:2000px;text-align:right;top:486.63px;font-size:15.8px;line-height:15.8px;font-weight:700;color:#000;"><span style="display:inline-block;transform:scaleX(1.0350);transform-origin:right 0;">0.00</span></div>
<div class="t" style="left:-177.5999999999999px;width:2000px;text-align:right;top:462.63px;font-size:15.8px;line-height:15.8px;color:#000;"><span style="display:inline-block;transform:scaleX(1.0200);transform-origin:right 0;">0.00</span></div>
<div class="t" style="left:-177.5999999999999px;width:2000px;text-align:right;top:486.63px;font-size:15.8px;line-height:15.8px;font-weight:700;color:#000;"><span style="display:inline-block;transform:scaleX(1.0350);transform-origin:right 0;">0.00</span></div>
<div style="position:absolute;left:60px;top:481px;width:361px;height:1px;background:repeating-linear-gradient(90deg,#000 0 1px,transparent 1px 3px,#000 3px 4px);"></div>
<div style="position:absolute;left:654px;top:481px;width:1240px;height:1px;background:repeating-linear-gradient(90deg,#000 0 1px,transparent 1px 3px,#000 3px 4px);"></div>
<div style="position:absolute;left:60px;top:505px;width:361px;height:1px;background:#000;"></div>
<div style="position:absolute;left:654px;top:505px;width:1240px;height:1px;background:#000;"></div>
<div class="t" style="left:64px;top:558.63px;font-size:15.8px;line-height:15.8px;font-weight:700;color:#000;"><span style="display:inline-block;transform:scaleX(0.9967);transform-origin:left 0;">Marketing expenses</span></div>
<div style="position:absolute;left:60px;top:577px;width:361px;height:1px;background:repeating-linear-gradient(90deg,#000 0 1px,transparent 1px 3px,#000 3px 4px);"></div>
<div class="t" style="left:64px;top:582.63px;font-size:15.8px;line-height:15.8px;color:#000;"><span style="display:inline-block;transform:scaleX(1.0513);transform-origin:left 0;">Amount per period</span></div>
<div class="t" style="left:452px;top:582.63px;font-size:15.8px;line-height:15.8px;color:#000;"><span style="display:inline-block;transform:scaleX(0.8817);transform-origin:left 0;">USD</span></div>
<div class="t" style="left:64px;top:606.63px;font-size:15.8px;line-height:15.8px;font-weight:700;color:#000;"><span style="display:inline-block;transform:scaleX(1.0279);transform-origin:left 0;">Total</span></div>
<div class="t" style="left:452px;top:606.63px;font-size:15.8px;line-height:15.8px;font-weight:700;color:#000;"><span style="display:inline-block;transform:scaleX(0.9057);transform-origin:left 0;">USD</span></div>
<div class="t" style="left:-1232.6px;width:2000px;text-align:right;top:582.63px;font-size:15.8px;line-height:15.8px;color:#000;"><span style="display:inline-block;transform:scaleX(1.0200);transform-origin:right 0;">-23,500.00</span></div>
<div class="t" style="left:-1232.6px;width:2000px;text-align:right;top:606.63px;font-size:15.8px;line-height:15.8px;font-weight:700;color:#000;"><span style="display:inline-block;transform:scaleX(1.0350);transform-origin:right 0;">-23,500.00</span></div>
<div class="t" style="left:-1115.6px;width:2000px;text-align:right;top:582.63px;font-size:15.8px;line-height:15.8px;color:#000;"><span style="display:inline-block;transform:scaleX(1.0200);transform-origin:right 0;">0.00</span></div>
<div class="t" style="left:-1115.6px;width:2000px;text-align:right;top:606.63px;font-size:15.8px;line-height:15.8px;font-weight:700;color:#000;"><span style="display:inline-block;transform:scaleX(1.0350);transform-origin:right 0;">0.00</span></div>
<div class="t" style="left:-998.6px;width:2000px;text-align:right;top:582.63px;font-size:15.8px;line-height:15.8px;color:#000;"><span style="display:inline-block;transform:scaleX(1.0200);transform-origin:right 0;">0.00</span></div>
<div class="t" style="left:-998.6px;width:2000px;text-align:right;top:606.63px;font-size:15.8px;line-height:15.8px;font-weight:700;color:#000;"><span style="display:inline-block;transform:scaleX(1.0350);transform-origin:right 0;">0.00</span></div>
<div class="t" style="left:-881.5999999999999px;width:2000px;text-align:right;top:582.63px;font-size:15.8px;line-height:15.8px;color:#000;"><span style="display:inline-block;transform:scaleX(1.0200);transform-origin:right 0;">0.00</span></div>
<div class="t" style="left:-881.5999999999999px;width:2000px;text-align:right;top:606.63px;font-size:15.8px;line-height:15.8px;font-weight:700;color:#000;"><span style="display:inline-block;transform:scaleX(1.0350);transform-origin:right 0;">0.00</span></div>
<div class="t" style="left:-764.5999999999999px;width:2000px;text-align:right;top:582.63px;font-size:15.8px;line-height:15.8px;color:#000;"><span style="display:inline-block;transform:scaleX(1.0200);transform-origin:right 0;">0.00</span></div>
<div class="t" style="left:-764.5999999999999px;width:2000px;text-align:right;top:606.63px;font-size:15.8px;line-height:15.8px;font-weight:700;color:#000;"><span style="display:inline-block;transform:scaleX(1.0350);transform-origin:right 0;">0.00</span></div>
<div class="t" style="left:-647.5999999999999px;width:2000px;text-align:right;top:582.63px;font-size:15.8px;line-height:15.8px;color:#000;"><span style="display:inline-block;transform:scaleX(1.0200);transform-origin:right 0;">0.00</span></div>
<div class="t" style="left:-647.5999999999999px;width:2000px;text-align:right;top:606.63px;font-size:15.8px;line-height:15.8px;font-weight:700;color:#000;"><span style="display:inline-block;transform:scaleX(1.0350);transform-origin:right 0;">0.00</span></div>
<div class="t" style="left:-530.5999999999999px;width:2000px;text-align:right;top:582.63px;font-size:15.8px;line-height:15.8px;color:#000;"><span style="display:inline-block;transform:scaleX(1.0200);transform-origin:right 0;">0.00</span></div>
<div class="t" style="left:-530.5999999999999px;width:2000px;text-align:right;top:606.63px;font-size:15.8px;line-height:15.8px;font-weight:700;color:#000;"><span style="display:inline-block;transform:scaleX(1.0350);transform-origin:right 0;">0.00</span></div>
<div class="t" style="left:-413.5999999999999px;width:2000px;text-align:right;top:582.63px;font-size:15.8px;line-height:15.8px;color:#000;"><span style="display:inline-block;transform:scaleX(1.0200);transform-origin:right 0;">0.00</span></div>
<div class="t" style="left:-413.5999999999999px;width:2000px;text-align:right;top:606.63px;font-size:15.8px;line-height:15.8px;font-weight:700;color:#000;"><span style="display:inline-block;transform:scaleX(1.0350);transform-origin:right 0;">0.00</span></div>
<div class="t" style="left:-296.5999999999999px;width:2000px;text-align:right;top:582.63px;font-size:15.8px;line-height:15.8px;color:#000;"><span style="display:inline-block;transform:scaleX(1.0200);transform-origin:right 0;">0.00</span></div>
<div class="t" style="left:-296.5999999999999px;width:2000px;text-align:right;top:606.63px;font-size:15.8px;line-height:15.8px;font-weight:700;color:#000;"><span style="display:inline-block;transform:scaleX(1.0350);transform-origin:right 0;">0.00</span></div>
<div class="t" style="left:-177.5999999999999px;width:2000px;text-align:right;top:582.63px;font-size:15.8px;line-height:15.8px;color:#000;"><span style="display:inline-block;transform:scaleX(1.0200);transform-origin:right 0;">0.00</span></div>
<div class="t" style="left:-177.5999999999999px;width:2000px;text-align:right;top:606.63px;font-size:15.8px;line-height:15.8px;font-weight:700;color:#000;"><span style="display:inline-block;transform:scaleX(1.0350);transform-origin:right 0;">0.00</span></div>
<div style="position:absolute;left:60px;top:601px;width:361px;height:1px;background:repeating-linear-gradient(90deg,#000 0 1px,transparent 1px 3px,#000 3px 4px);"></div>
<div style="position:absolute;left:654px;top:601px;width:1240px;height:1px;background:repeating-linear-gradient(90deg,#000 0 1px,transparent 1px 3px,#000 3px 4px);"></div>
<div style="position:absolute;left:60px;top:625px;width:361px;height:1px;background:#000;"></div>
<div style="position:absolute;left:654px;top:625px;width:1240px;height:1px;background:#000;"></div>
<div class="t" style="left:64px;top:678.63px;font-size:15.8px;line-height:15.8px;font-weight:700;color:#000;"><span style="display:inline-block;transform:scaleX(0.9913);transform-origin:left 0;">Technology and infrastructure costs for</span></div>
<div class="t" style="left:64px;top:702.63px;font-size:15.8px;line-height:15.8px;font-weight:700;color:#000;"><span style="display:inline-block;transform:scaleX(0.9860);transform-origin:left 0;">managing the ABS</span></div>
<div style="position:absolute;left:60px;top:721px;width:361px;height:1px;background:repeating-linear-gradient(90deg,#000 0 1px,transparent 1px 3px,#000 3px 4px);"></div>
<div class="t" style="left:64px;top:726.63px;font-size:15.8px;line-height:15.8px;color:#000;"><span style="display:inline-block;transform:scaleX(1.0513);transform-origin:left 0;">Amount per period</span></div>
<div class="t" style="left:452px;top:726.63px;font-size:15.8px;line-height:15.8px;color:#000;"><span style="display:inline-block;transform:scaleX(0.8817);transform-origin:left 0;">USD</span></div>
<div class="t" style="left:64px;top:750.63px;font-size:15.8px;line-height:15.8px;font-weight:700;color:#000;"><span style="display:inline-block;transform:scaleX(1.0279);transform-origin:left 0;">Total</span></div>
<div class="t" style="left:452px;top:750.63px;font-size:15.8px;line-height:15.8px;font-weight:700;color:#000;"><span style="display:inline-block;transform:scaleX(0.9057);transform-origin:left 0;">USD</span></div>
<div class="t" style="left:-1232.6px;width:2000px;text-align:right;top:726.63px;font-size:15.8px;line-height:15.8px;color:#000;"><span style="display:inline-block;transform:scaleX(1.0200);transform-origin:right 0;">-1,000.00</span></div>
<div class="t" style="left:-1232.6px;width:2000px;text-align:right;top:750.63px;font-size:15.8px;line-height:15.8px;font-weight:700;color:#000;"><span style="display:inline-block;transform:scaleX(1.0350);transform-origin:right 0;">-1,000.00</span></div>
<div class="t" style="left:-1115.6px;width:2000px;text-align:right;top:726.63px;font-size:15.8px;line-height:15.8px;color:#000;"><span style="display:inline-block;transform:scaleX(1.0200);transform-origin:right 0;">0.00</span></div>
<div class="t" style="left:-1115.6px;width:2000px;text-align:right;top:750.63px;font-size:15.8px;line-height:15.8px;font-weight:700;color:#000;"><span style="display:inline-block;transform:scaleX(1.0350);transform-origin:right 0;">0.00</span></div>
<div class="t" style="left:-998.6px;width:2000px;text-align:right;top:726.63px;font-size:15.8px;line-height:15.8px;color:#000;"><span style="display:inline-block;transform:scaleX(1.0200);transform-origin:right 0;">0.00</span></div>
<div class="t" style="left:-998.6px;width:2000px;text-align:right;top:750.63px;font-size:15.8px;line-height:15.8px;font-weight:700;color:#000;"><span style="display:inline-block;transform:scaleX(1.0350);transform-origin:right 0;">0.00</span></div>
<div class="t" style="left:-881.5999999999999px;width:2000px;text-align:right;top:726.63px;font-size:15.8px;line-height:15.8px;color:#000;"><span style="display:inline-block;transform:scaleX(1.0200);transform-origin:right 0;">0.00</span></div>
<div class="t" style="left:-881.5999999999999px;width:2000px;text-align:right;top:750.63px;font-size:15.8px;line-height:15.8px;font-weight:700;color:#000;"><span style="display:inline-block;transform:scaleX(1.0350);transform-origin:right 0;">0.00</span></div>
<div class="t" style="left:-764.5999999999999px;width:2000px;text-align:right;top:726.63px;font-size:15.8px;line-height:15.8px;color:#000;"><span style="display:inline-block;transform:scaleX(1.0200);transform-origin:right 0;">0.00</span></div>
<div class="t" style="left:-764.5999999999999px;width:2000px;text-align:right;top:750.63px;font-size:15.8px;line-height:15.8px;font-weight:700;color:#000;"><span style="display:inline-block;transform:scaleX(1.0350);transform-origin:right 0;">0.00</span></div>
<div class="t" style="left:-647.5999999999999px;width:2000px;text-align:right;top:726.63px;font-size:15.8px;line-height:15.8px;color:#000;"><span style="display:inline-block;transform:scaleX(1.0200);transform-origin:right 0;">0.00</span></div>
<div class="t" style="left:-647.5999999999999px;width:2000px;text-align:right;top:750.63px;font-size:15.8px;line-height:15.8px;font-weight:700;color:#000;"><span style="display:inline-block;transform:scaleX(1.0350);transform-origin:right 0;">0.00</span></div>
<div class="t" style="left:-530.5999999999999px;width:2000px;text-align:right;top:726.63px;font-size:15.8px;line-height:15.8px;color:#000;"><span style="display:inline-block;transform:scaleX(1.0200);transform-origin:right 0;">0.00</span></div>
<div class="t" style="left:-530.5999999999999px;width:2000px;text-align:right;top:750.63px;font-size:15.8px;line-height:15.8px;font-weight:700;color:#000;"><span style="display:inline-block;transform:scaleX(1.0350);transform-origin:right 0;">0.00</span></div>
<div class="t" style="left:-413.5999999999999px;width:2000px;text-align:right;top:726.63px;font-size:15.8px;line-height:15.8px;color:#000;"><span style="display:inline-block;transform:scaleX(1.0200);transform-origin:right 0;">0.00</span></div>
<div class="t" style="left:-413.5999999999999px;width:2000px;text-align:right;top:750.63px;font-size:15.8px;line-height:15.8px;font-weight:700;color:#000;"><span style="display:inline-block;transform:scaleX(1.0350);transform-origin:right 0;">0.00</span></div>
<div class="t" style="left:-296.5999999999999px;width:2000px;text-align:right;top:726.63px;font-size:15.8px;line-height:15.8px;color:#000;"><span style="display:inline-block;transform:scaleX(1.0200);transform-origin:right 0;">0.00</span></div>
<div class="t" style="left:-296.5999999999999px;width:2000px;text-align:right;top:750.63px;font-size:15.8px;line-height:15.8px;font-weight:700;color:#000;"><span style="display:inline-block;transform:scaleX(1.0350);transform-origin:right 0;">0.00</span></div>
<div class="t" style="left:-177.5999999999999px;width:2000px;text-align:right;top:726.63px;font-size:15.8px;line-height:15.8px;color:#000;"><span style="display:inline-block;transform:scaleX(1.0200);transform-origin:right 0;">0.00</span></div>
<div class="t" style="left:-177.5999999999999px;width:2000px;text-align:right;top:750.63px;font-size:15.8px;line-height:15.8px;font-weight:700;color:#000;"><span style="display:inline-block;transform:scaleX(1.0350);transform-origin:right 0;">0.00</span></div>
<div style="position:absolute;left:60px;top:745px;width:361px;height:1px;background:repeating-linear-gradient(90deg,#000 0 1px,transparent 1px 3px,#000 3px 4px);"></div>
<div style="position:absolute;left:654px;top:745px;width:1240px;height:1px;background:repeating-linear-gradient(90deg,#000 0 1px,transparent 1px 3px,#000 3px 4px);"></div>
<div style="position:absolute;left:60px;top:769px;width:361px;height:1px;background:#000;"></div>
<div style="position:absolute;left:654px;top:769px;width:1240px;height:1px;background:#000;"></div>
<div class="t" style="left:64px;top:822.63px;font-size:15.8px;line-height:15.8px;font-weight:700;color:#000;"><span style="display:inline-block;transform:scaleX(1.0143);transform-origin:left 0;">Property management fees</span></div>
<div style="position:absolute;left:60px;top:841px;width:361px;height:1px;background:repeating-linear-gradient(90deg,#000 0 1px,transparent 1px 3px,#000 3px 4px);"></div>
<div class="t" style="left:64px;top:846.63px;font-size:15.8px;line-height:15.8px;color:#000;"><span style="display:inline-block;transform:scaleX(1.0513);transform-origin:left 0;">Amount per period</span></div>
<div class="t" style="left:452px;top:846.63px;font-size:15.8px;line-height:15.8px;color:#000;"><span style="display:inline-block;transform:scaleX(0.8817);transform-origin:left 0;">USD</span></div>
<div class="t" style="left:64px;top:870.63px;font-size:15.8px;line-height:15.8px;font-weight:700;color:#000;"><span style="display:inline-block;transform:scaleX(1.0279);transform-origin:left 0;">Total</span></div>
<div class="t" style="left:452px;top:870.63px;font-size:15.8px;line-height:15.8px;font-weight:700;color:#000;"><span style="display:inline-block;transform:scaleX(0.9057);transform-origin:left 0;">USD</span></div>
<div class="t" style="left:-1232.6px;width:2000px;text-align:right;top:846.63px;font-size:15.8px;line-height:15.8px;color:#000;"><span style="display:inline-block;transform:scaleX(1.0200);transform-origin:right 0;">-9,000.00</span></div>
<div class="t" style="left:-1232.6px;width:2000px;text-align:right;top:870.63px;font-size:15.8px;line-height:15.8px;font-weight:700;color:#000;"><span style="display:inline-block;transform:scaleX(1.0350);transform-origin:right 0;">-9,000.00</span></div>
<div class="t" style="left:-1115.6px;width:2000px;text-align:right;top:846.63px;font-size:15.8px;line-height:15.8px;color:#000;"><span style="display:inline-block;transform:scaleX(1.0200);transform-origin:right 0;">0.00</span></div>
<div class="t" style="left:-1115.6px;width:2000px;text-align:right;top:870.63px;font-size:15.8px;line-height:15.8px;font-weight:700;color:#000;"><span style="display:inline-block;transform:scaleX(1.0350);transform-origin:right 0;">0.00</span></div>
<div class="t" style="left:-998.6px;width:2000px;text-align:right;top:846.63px;font-size:15.8px;line-height:15.8px;color:#000;"><span style="display:inline-block;transform:scaleX(1.0200);transform-origin:right 0;">0.00</span></div>
<div class="t" style="left:-998.6px;width:2000px;text-align:right;top:870.63px;font-size:15.8px;line-height:15.8px;font-weight:700;color:#000;"><span style="display:inline-block;transform:scaleX(1.0350);transform-origin:right 0;">0.00</span></div>
<div class="t" style="left:-881.5999999999999px;width:2000px;text-align:right;top:846.63px;font-size:15.8px;line-height:15.8px;color:#000;"><span style="display:inline-block;transform:scaleX(1.0200);transform-origin:right 0;">0.00</span></div>
<div class="t" style="left:-881.5999999999999px;width:2000px;text-align:right;top:870.63px;font-size:15.8px;line-height:15.8px;font-weight:700;color:#000;"><span style="display:inline-block;transform:scaleX(1.0350);transform-origin:right 0;">0.00</span></div>
<div class="t" style="left:-764.5999999999999px;width:2000px;text-align:right;top:846.63px;font-size:15.8px;line-height:15.8px;color:#000;"><span style="display:inline-block;transform:scaleX(1.0200);transform-origin:right 0;">0.00</span></div>
<div class="t" style="left:-764.5999999999999px;width:2000px;text-align:right;top:870.63px;font-size:15.8px;line-height:15.8px;font-weight:700;color:#000;"><span style="display:inline-block;transform:scaleX(1.0350);transform-origin:right 0;">0.00</span></div>
<div class="t" style="left:-647.5999999999999px;width:2000px;text-align:right;top:846.63px;font-size:15.8px;line-height:15.8px;color:#000;"><span style="display:inline-block;transform:scaleX(1.0200);transform-origin:right 0;">0.00</span></div>
<div class="t" style="left:-647.5999999999999px;width:2000px;text-align:right;top:870.63px;font-size:15.8px;line-height:15.8px;font-weight:700;color:#000;"><span style="display:inline-block;transform:scaleX(1.0350);transform-origin:right 0;">0.00</span></div>
<div class="t" style="left:-530.5999999999999px;width:2000px;text-align:right;top:846.63px;font-size:15.8px;line-height:15.8px;color:#000;"><span style="display:inline-block;transform:scaleX(1.0200);transform-origin:right 0;">0.00</span></div>
<div class="t" style="left:-530.5999999999999px;width:2000px;text-align:right;top:870.63px;font-size:15.8px;line-height:15.8px;font-weight:700;color:#000;"><span style="display:inline-block;transform:scaleX(1.0350);transform-origin:right 0;">0.00</span></div>
<div class="t" style="left:-413.5999999999999px;width:2000px;text-align:right;top:846.63px;font-size:15.8px;line-height:15.8px;color:#000;"><span style="display:inline-block;transform:scaleX(1.0200);transform-origin:right 0;">0.00</span></div>
<div class="t" style="left:-413.5999999999999px;width:2000px;text-align:right;top:870.63px;font-size:15.8px;line-height:15.8px;font-weight:700;color:#000;"><span style="display:inline-block;transform:scaleX(1.0350);transform-origin:right 0;">0.00</span></div>
<div class="t" style="left:-296.5999999999999px;width:2000px;text-align:right;top:846.63px;font-size:15.8px;line-height:15.8px;color:#000;"><span style="display:inline-block;transform:scaleX(1.0200);transform-origin:right 0;">0.00</span></div>
<div class="t" style="left:-296.5999999999999px;width:2000px;text-align:right;top:870.63px;font-size:15.8px;line-height:15.8px;font-weight:700;color:#000;"><span style="display:inline-block;transform:scaleX(1.0350);transform-origin:right 0;">0.00</span></div>
<div class="t" style="left:-177.5999999999999px;width:2000px;text-align:right;top:846.63px;font-size:15.8px;line-height:15.8px;color:#000;"><span style="display:inline-block;transform:scaleX(1.0200);transform-origin:right 0;">0.00</span></div>
<div class="t" style="left:-177.5999999999999px;width:2000px;text-align:right;top:870.63px;font-size:15.8px;line-height:15.8px;font-weight:700;color:#000;"><span style="display:inline-block;transform:scaleX(1.0350);transform-origin:right 0;">0.00</span></div>
<div style="position:absolute;left:60px;top:865px;width:361px;height:1px;background:repeating-linear-gradient(90deg,#000 0 1px,transparent 1px 3px,#000 3px 4px);"></div>
<div style="position:absolute;left:654px;top:865px;width:1240px;height:1px;background:repeating-linear-gradient(90deg,#000 0 1px,transparent 1px 3px,#000 3px 4px);"></div>
<div style="position:absolute;left:60px;top:889px;width:361px;height:1px;background:#000;"></div>
<div style="position:absolute;left:654px;top:889px;width:1240px;height:1px;background:#000;"></div>
<div class="t" style="left:64px;top:942.63px;font-size:15.8px;line-height:15.8px;font-weight:700;color:#000;"><span style="display:inline-block;transform:scaleX(0.9934);transform-origin:left 0;">Insurance premiums</span></div>
<div style="position:absolute;left:60px;top:961px;width:361px;height:1px;background:repeating-linear-gradient(90deg,#000 0 1px,transparent 1px 3px,#000 3px 4px);"></div>
<div class="t" style="left:64px;top:966.63px;font-size:15.8px;line-height:15.8px;color:#000;"><span style="display:inline-block;transform:scaleX(1.0513);transform-origin:left 0;">Amount per period</span></div>
<div class="t" style="left:452px;top:966.63px;font-size:15.8px;line-height:15.8px;color:#000;"><span style="display:inline-block;transform:scaleX(0.8817);transform-origin:left 0;">USD</span></div>
<div class="t" style="left:64px;top:990.63px;font-size:15.8px;line-height:15.8px;font-weight:700;color:#000;"><span style="display:inline-block;transform:scaleX(1.0279);transform-origin:left 0;">Total</span></div>
<div class="t" style="left:452px;top:990.63px;font-size:15.8px;line-height:15.8px;font-weight:700;color:#000;"><span style="display:inline-block;transform:scaleX(0.9057);transform-origin:left 0;">USD</span></div>
<div class="t" style="left:-1232.6px;width:2000px;text-align:right;top:966.63px;font-size:15.8px;line-height:15.8px;color:#000;"><span style="display:inline-block;transform:scaleX(1.0200);transform-origin:right 0;">-11,900.00</span></div>
<div class="t" style="left:-1232.6px;width:2000px;text-align:right;top:990.63px;font-size:15.8px;line-height:15.8px;font-weight:700;color:#000;"><span style="display:inline-block;transform:scaleX(1.0350);transform-origin:right 0;">-11,900.00</span></div>
<div class="t" style="left:-1115.6px;width:2000px;text-align:right;top:966.63px;font-size:15.8px;line-height:15.8px;color:#000;"><span style="display:inline-block;transform:scaleX(1.0200);transform-origin:right 0;">0.00</span></div>
<div class="t" style="left:-1115.6px;width:2000px;text-align:right;top:990.63px;font-size:15.8px;line-height:15.8px;font-weight:700;color:#000;"><span style="display:inline-block;transform:scaleX(1.0350);transform-origin:right 0;">0.00</span></div>
<div class="t" style="left:-998.6px;width:2000px;text-align:right;top:966.63px;font-size:15.8px;line-height:15.8px;color:#000;"><span style="display:inline-block;transform:scaleX(1.0200);transform-origin:right 0;">0.00</span></div>
<div class="t" style="left:-998.6px;width:2000px;text-align:right;top:990.63px;font-size:15.8px;line-height:15.8px;font-weight:700;color:#000;"><span style="display:inline-block;transform:scaleX(1.0350);transform-origin:right 0;">0.00</span></div>
<div class="t" style="left:-881.5999999999999px;width:2000px;text-align:right;top:966.63px;font-size:15.8px;line-height:15.8px;color:#000;"><span style="display:inline-block;transform:scaleX(1.0200);transform-origin:right 0;">0.00</span></div>
<div class="t" style="left:-881.5999999999999px;width:2000px;text-align:right;top:990.63px;font-size:15.8px;line-height:15.8px;font-weight:700;color:#000;"><span style="display:inline-block;transform:scaleX(1.0350);transform-origin:right 0;">0.00</span></div>
<div class="t" style="left:-764.5999999999999px;width:2000px;text-align:right;top:966.63px;font-size:15.8px;line-height:15.8px;color:#000;"><span style="display:inline-block;transform:scaleX(1.0200);transform-origin:right 0;">0.00</span></div>
<div class="t" style="left:-764.5999999999999px;width:2000px;text-align:right;top:990.63px;font-size:15.8px;line-height:15.8px;font-weight:700;color:#000;"><span style="display:inline-block;transform:scaleX(1.0350);transform-origin:right 0;">0.00</span></div>
<div class="t" style="left:-647.5999999999999px;width:2000px;text-align:right;top:966.63px;font-size:15.8px;line-height:15.8px;color:#000;"><span style="display:inline-block;transform:scaleX(1.0200);transform-origin:right 0;">0.00</span></div>
<div class="t" style="left:-647.5999999999999px;width:2000px;text-align:right;top:990.63px;font-size:15.8px;line-height:15.8px;font-weight:700;color:#000;"><span style="display:inline-block;transform:scaleX(1.0350);transform-origin:right 0;">0.00</span></div>
<div class="t" style="left:-530.5999999999999px;width:2000px;text-align:right;top:966.63px;font-size:15.8px;line-height:15.8px;color:#000;"><span style="display:inline-block;transform:scaleX(1.0200);transform-origin:right 0;">0.00</span></div>
<div class="t" style="left:-530.5999999999999px;width:2000px;text-align:right;top:990.63px;font-size:15.8px;line-height:15.8px;font-weight:700;color:#000;"><span style="display:inline-block;transform:scaleX(1.0350);transform-origin:right 0;">0.00</span></div>
<div class="t" style="left:-413.5999999999999px;width:2000px;text-align:right;top:966.63px;font-size:15.8px;line-height:15.8px;color:#000;"><span style="display:inline-block;transform:scaleX(1.0200);transform-origin:right 0;">0.00</span></div>
<div class="t" style="left:-413.5999999999999px;width:2000px;text-align:right;top:990.63px;font-size:15.8px;line-height:15.8px;font-weight:700;color:#000;"><span style="display:inline-block;transform:scaleX(1.0350);transform-origin:right 0;">0.00</span></div>
<div class="t" style="left:-296.5999999999999px;width:2000px;text-align:right;top:966.63px;font-size:15.8px;line-height:15.8px;color:#000;"><span style="display:inline-block;transform:scaleX(1.0200);transform-origin:right 0;">0.00</span></div>
<div class="t" style="left:-296.5999999999999px;width:2000px;text-align:right;top:990.63px;font-size:15.8px;line-height:15.8px;font-weight:700;color:#000;"><span style="display:inline-block;transform:scaleX(1.0350);transform-origin:right 0;">0.00</span></div>
<div class="t" style="left:-177.5999999999999px;width:2000px;text-align:right;top:966.63px;font-size:15.8px;line-height:15.8px;color:#000;"><span style="display:inline-block;transform:scaleX(1.0200);transform-origin:right 0;">0.00</span></div>
<div class="t" style="left:-177.5999999999999px;width:2000px;text-align:right;top:990.63px;font-size:15.8px;line-height:15.8px;font-weight:700;color:#000;"><span style="display:inline-block;transform:scaleX(1.0350);transform-origin:right 0;">0.00</span></div>
<div style="position:absolute;left:60px;top:985px;width:361px;height:1px;background:repeating-linear-gradient(90deg,#000 0 1px,transparent 1px 3px,#000 3px 4px);"></div>
<div style="position:absolute;left:654px;top:985px;width:1240px;height:1px;background:repeating-linear-gradient(90deg,#000 0 1px,transparent 1px 3px,#000 3px 4px);"></div>
<div style="position:absolute;left:60px;top:1009px;width:361px;height:1px;background:#000;"></div>
<div style="position:absolute;left:654px;top:1009px;width:1240px;height:1px;background:#000;"></div>
<div class="t" style="left:64px;top:1062.63px;font-size:15.8px;line-height:15.8px;font-weight:700;color:#000;"><span style="display:inline-block;transform:scaleX(0.9697);transform-origin:left 0;">Real estate taxes</span></div>
</div>
<div style="position:absolute;left:1894px;top:98px;width:25px;height:975px;background:#e6e9ee;"></div>
<div style="position:absolute;left:1897px;top:99px;width:21px;height:972px;background:#f5f5f5;border-radius:10px;"></div>
<svg style="position:absolute;left:1901px;top:103px;" width="13" height="10" viewBox="0 0 13 10"><path d="M6.5 1 L12 9 H1 Z" fill="#707070" stroke="#707070" stroke-width="1" stroke-linejoin="round"/></svg>
<div style="position:absolute;left:1902px;top:119px;width:11px;height:361px;background:#707070;border-radius:5.5px;"></div>
<svg style="position:absolute;left:1901px;top:1062px;" width="13" height="10" viewBox="0 0 13 10"><path d="M6.5 9 L12 1 H1 Z" fill="#707070" stroke="#707070" stroke-width="1" stroke-linejoin="round"/></svg>
<div style="position:absolute;left:0px;top:1073px;width:1919px;height:40px;background:#e6e9ee;"></div>
<div style="position:absolute;left:1897px;top:1060px;width:21px;height:15px;background:#f5f5f5;border-radius:0 0 10px 10px;"></div>
<svg style="position:absolute;left:1901px;top:1061px;" width="13" height="10" viewBox="0 0 13 10"><path d="M6.5 9 L12 1 H1 Z" fill="#707070" stroke="#707070" stroke-width="1" stroke-linejoin="round"/></svg>
<div style="position:absolute;left:0px;top:1113px;width:1919px;height:1px;background:#cfd2d6;"></div>
<svg style="position:absolute;left:29px;top:1085px;" width="12" height="14" viewBox="0 0 12 14"><path d="M9 1.5 L3 7 L9 12.5" fill="none" stroke="#9a9a9a" stroke-width="1.3"/></svg>
<svg style="position:absolute;left:70px;top:1085px;" width="12" height="14" viewBox="0 0 12 14"><path d="M3 1.5 L9 7 L3 12.5" fill="none" stroke="#333" stroke-width="1.3"/></svg>
<div style="position:absolute;left:590px;top:1073px;width:132px;height:12px;background:#fff;"></div>
<div style="position:absolute;left:584px;top:1073px;width:20px;height:16px;background:#e6e9ee;border-top-right-radius:7px;"></div>
<div style="position:absolute;left:708px;top:1073px;width:20px;height:16px;background:#e6e9ee;border-top-left-radius:7px;"></div>
<div style="position:absolute;left:604px;top:1070px;width:104px;height:38px;background:#fff;border-radius:0 0 6px 6px;"></div>
<div style="position:absolute;left:141px;top:1078px;width:81px;height:30px;background:#ffffff;border-radius:5px;"></div>
<div class="t" style="left:151.6px;top:1085.31px;font-size:17px;line-height:17px;color:#262626;"><span style="display:inline-block;transform:scaleX(1.0359);transform-origin:left 0;">How To</span></div>
<div style="position:absolute;left:233px;top:1078px;width:115px;height:30px;background:#fdf8c8;border-radius:5px;"></div>
<div class="t" style="left:244.8px;top:1085.31px;font-size:17px;line-height:17px;color:#262626;"><span style="display:inline-block;transform:scaleX(1.0301);transform-origin:left 0;">Main Inputs</span></div>
<div style="position:absolute;left:359.2px;top:1078px;width:134.7px;height:30px;background:#fdf8c8;border-radius:5px;"></div>
<div class="t" style="left:370.7px;top:1085.31px;font-size:17px;line-height:17px;color:#262626;"><span style="display:inline-block;transform:scaleX(0.9655);transform-origin:left 0;">Asset Revenue</span></div>
<div class="t" style="left:516.8px;top:1085.31px;font-size:17px;line-height:17px;color:#262626;"><span style="display:inline-block;transform:scaleX(0.9582);transform-origin:left 0;">Revenue</span></div>
<div class="t" style="left:731px;top:1085.31px;font-size:17px;line-height:17px;color:#262626;"><span style="display:inline-block;transform:scaleX(1.0278);transform-origin:left 0;">Working Capital</span></div>
<div class="t" style="left:889px;top:1085.31px;font-size:17px;line-height:17px;color:#262626;"><span style="display:inline-block;transform:scaleX(0.9171);transform-origin:left 0;">CapEx</span></div>
<div class="t" style="left:968.3px;top:1085.31px;font-size:17px;line-height:17px;color:#262626;"><span style="display:inline-block;transform:scaleX(1.0043);transform-origin:left 0;">Funding</span></div>
<div class="t" style="left:1066.4px;top:1085.31px;font-size:17px;line-height:17px;color:#262626;"><span style="display:inline-block;transform:scaleX(1.0172);transform-origin:left 0;">Income Statement</span></div>
<div class="t" style="left:1241px;top:1085.31px;font-size:17px;line-height:17px;color:#262626;"><span style="display:inline-block;transform:scaleX(0.9650);transform-origin:left 0;">Cash Flow</span></div>
<div class="t" style="left:1353.7px;top:1085.31px;font-size:17px;line-height:17px;color:#262626;"><span style="display:inline-block;transform:scaleX(0.9649);transform-origin:left 0;">Balance Sheet</span></div>
<div style="position:absolute;left:228px;top:1082px;width:1px;height:22px;background:#c8cbd0;"></div>
<div style="position:absolute;left:354px;top:1082px;width:1px;height:22px;background:#c8cbd0;"></div>
<div style="position:absolute;left:499px;top:1082px;width:1px;height:22px;background:#c8cbd0;"></div>
<div style="position:absolute;left:598px;top:1082px;width:1px;height:22px;background:#c8cbd0;"></div>
<div style="position:absolute;left:714px;top:1082px;width:1px;height:22px;background:#c8cbd0;"></div>
<div style="position:absolute;left:872px;top:1082px;width:1px;height:22px;background:#c8cbd0;"></div>
<div style="position:absolute;left:952px;top:1082px;width:1px;height:22px;background:#c8cbd0;"></div>
<div style="position:absolute;left:1048px;top:1082px;width:1px;height:22px;background:#c8cbd0;"></div>
<div style="position:absolute;left:1225px;top:1082px;width:1px;height:22px;background:#c8cbd0;"></div>
<div style="position:absolute;left:1336px;top:1082px;width:1px;height:22px;background:#c8cbd0;"></div>
<div style="position:absolute;left:1477px;top:1082px;width:1px;height:22px;background:#c8cbd0;"></div>
<div class="t" style="left:614px;top:1081.19px;font-size:17.5px;line-height:17.5px;color:#1f1f1f;-webkit-text-stroke:0.45px #1f1f1f;"><span style="display:inline-block;transform:scaleX(0.9595);transform-origin:left 0;">General Ex</span></div>
<div style="position:absolute;left:614px;top:1103px;width:84px;height:2px;background:#107c41;"></div>
<div style="position:absolute;left:1483px;top:1078px;width:96px;height:30px;overflow:hidden;border-radius:5px 0 0 5px;background:#fdf8c8;">
<div class="t" style="left:12.4px;top:7.31px;font-size:17px;line-height:17px;color:#262626;"><span style="display:inline-block;transform:scaleX(1.02);transform-origin:left 0;">Salary Assumptions</span></div></div>
<svg style="position:absolute;left:1589px;top:1088px;" width="18" height="8" viewBox="0 0 18 8"><g fill="#333"><circle cx="3" cy="4" r="1.7"/><circle cx="8.5" cy="4" r="1.7"/><circle cx="14" cy="4" r="1.7"/></g></svg>
<svg style="position:absolute;left:1630px;top:1084px;" width="17" height="17" viewBox="0 0 17 17"><g stroke="#333" stroke-width="1.4"><line x1="8.5" y1="1" x2="8.5" y2="16"/><line x1="1" y1="8.5" x2="16" y2="8.5"/></g></svg>
<svg style="position:absolute;left:1674px;top:1085px;" width="8" height="17" viewBox="0 0 8 17"><g fill="#333"><circle cx="4" cy="3" r="1.6"/><circle cx="4" cy="8.5" r="1.6"/><circle cx="4" cy="14" r="1.6"/></g></svg>
<div style="position:absolute;left:1699px;top:1082px;width:198px;height:21px;background:#f5f5f5;border-radius:10.5px;"></div>
<svg style="position:absolute;left:1704px;top:1086px;" width="12" height="13" viewBox="0 0 12 13"><path d="M10 1.5 L2 6.5 L10 11.5 Z" fill="#707070" stroke="#707070" stroke-linejoin="round"/></svg>
<div style="position:absolute;left:1720px;top:1087px;width:80px;height:11px;background:#707070;border-radius:5.5px;"></div>
<svg style="position:absolute;left:1881px;top:1086px;" width="12" height="13" viewBox="0 0 12 13"><path d="M2 1.5 L10 6.5 L2 11.5 Z" fill="#707070" stroke="#707070" stroke-linejoin="round"/></svg>
<div style="position:absolute;left:0px;top:1114px;width:1919px;height:21px;background:#f4f4f4;"></div>
<div class="t" style="left:15.4px;top:1120.15px;font-size:14px;line-height:14px;color:#444;"><span style="display:inline-block;transform:scaleX(0.8800);transform-origin:left 0;">Ready</span></div>
<svg style="position:absolute;left:74px;top:1118px;" width="20" height="17" viewBox="0 0 20 17"><g fill="none" stroke="#2b2b2b"><path d="M2 17 V1.9 H18.1 V6.5" stroke-width="1.6"/><line x1="2" y1="4.6" x2="18.1" y2="4.6" stroke-width="1.4"/><line x1="4.2" y1="7.5" x2="7" y2="7.5" stroke-width="1.2"/><line x1="4.2" y1="10" x2="6.2" y2="10" stroke-width="1.2"/><circle cx="13" cy="12" r="5" stroke-width="1.5"/></g><circle cx="13" cy="12" r="2" fill="#2b2b2b"/></svg>
<svg style="position:absolute;left:113px;top:1117px;" width="22" height="18" viewBox="0 0 22 18"><g fill="none" stroke="#2b2b2b" stroke-width="1.5" stroke-linecap="round"><circle cx="9.7" cy="4.1" r="2.1"/><path d="M2.5 5.5 C2 7.5 4.5 8 7.5 8.3 H12 C15 8 17.5 7.5 16.5 5.5"/><path d="M7.5 8.3 C7.7 11 7 14 5.5 18"/><path d="M12 8.3 C11.7 10 11.2 11.5 10 13 L8.5 18"/><path d="M13 11.5 L20 18.5 M19.5 11.5 L12.5 18.5" stroke-width="1.3"/></g></svg>
<div class="t" style="left:137.9px;top:1120.15px;font-size:14px;line-height:14px;font-weight:700;color:#333;"><span style="display:inline-block;transform:scaleX(0.9037);transform-origin:left 0;">Accessibility: Investigate</span></div>
<div style="position:absolute;left:1548px;top:1114px;width:50px;height:21px;background:#dadada;"></div>
<svg style="position:absolute;left:1562px;top:1116px;" width="20" height="19" viewBox="0 0 20 19"><g fill="none" stroke="#3a3a3a" stroke-width="1.8"><rect x="2.9" y="2.9" width="14.2" height="14.2"/><line x1="7.6" y1="2" x2="7.6" y2="18"/><line x1="12.4" y1="2" x2="12.4" y2="18"/><line x1="2" y1="7.6" x2="18" y2="7.6"/><line x1="2" y1="12.4" x2="18" y2="12.4"/></g></svg>
<svg style="position:absolute;left:1612px;top:1116px;" width="22" height="19" viewBox="0 0 22 19"><g fill="none" stroke="#3a3a3a"><rect x="2.9" y="2.9" width="16.2" height="14.2" stroke-width="1.8"/><rect x="6.5" y="5.8" width="9" height="8.6" stroke-width="1.6"/><line x1="8.3" y1="8.3" x2="13.7" y2="8.3" stroke-width="1"/><line x1="8.3" y1="10.1" x2="13.7" y2="10.1" stroke-width="1"/><line x1="8.3" y1="12" x2="13.7" y2="12" stroke-width="1"/></g></svg>
<svg style="position:absolute;left:1662px;top:1116px;" width="22" height="19" viewBox="0 0 22 19"><g fill="none" stroke="#3a3a3a" stroke-width="1.8"><rect x="2.9" y="2.9" width="16.2" height="14.2"/><path d="M2.9 10.8 H12.6 V2.9"/><line x1="7.8" y1="2.9" x2="7.8" y2="10.8"/></g></svg>
<div style="position:absolute;left:1705px;top:1126px;width:9px;height:1.3px;background:#444;"></div>
<div style="position:absolute;left:1721px;top:1127px;width:125px;height:1px;background:#777;"></div>
<div style="position:absolute;left:1781px;top:1120px;width:6px;height:15px;background:#555;"></div>
<svg style="position:absolute;left:1851px;top:1121px;" width="12" height="12" viewBox="0 0 12 12"><g stroke="#444" stroke-width="1.2"><line x1="6" y1="1" x2="6" y2="11"/><line x1="1" y1="6" x2="11" y2="6"/></g></svg>
<div class="t" style="left:1878.7px;top:1120.15px;font-size:14px;line-height:14px;color:#444;"><span style="display:inline-block;transform:scaleX(0.8464);transform-origin:left 0;">100%</span></div>
</body></html>
